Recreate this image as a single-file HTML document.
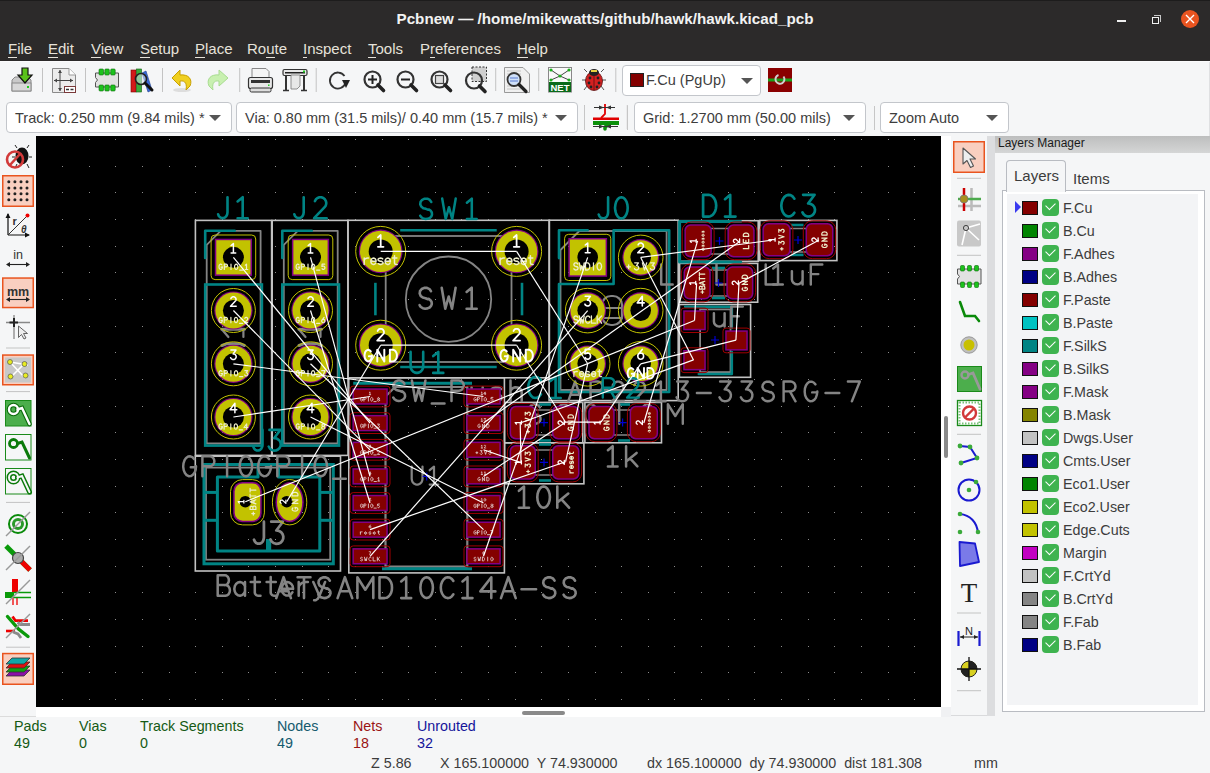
<!DOCTYPE html>
<html><head><meta charset="utf-8">
<style>
*{box-sizing:border-box}
html,body{margin:0;padding:0}
body{width:1210px;height:773px;overflow:hidden;position:relative;background:#f5f6f7;font-family:"Liberation Sans",sans-serif;color:#3c3c3c}
.a{position:absolute}
#title{left:0;top:0;width:1210px;height:61px;background:#2c2a2a;border-top:1px solid #1d1c1c}
#ttl{left:0;top:10px;width:1210px;text-align:center;color:#f2f2f2;font-weight:bold;font-size:15.2px;white-space:nowrap}
.menu{top:40px;color:#e6e2da;font-size:15px;white-space:nowrap}
.menu u{text-decoration:none;border-bottom:1.5px solid #e6e2da}
.combo{background:#fff;border:1px solid #c3c6cb;border-radius:4px;height:31px;top:102px}
.combo span{position:absolute;left:8px;top:7px;font-size:14.5px;color:#3d3d3d;white-space:nowrap}
.caret{position:absolute;width:0;height:0;border-left:6px solid transparent;border-right:6px solid transparent;border-top:6px solid #555}
.sep{background:#c6c6c6;width:1px}
.hsep{background:#c6c6c6;height:1px}
.btn{background:#f9cdbd;border:1.5px solid #e9541f}
.st{font-size:14.3px;white-space:nowrap;line-height:17px}
.lrow{left:1014px;height:23px;width:180px}
.sw{position:absolute;left:8px;top:1px;width:16px;height:14px;border:1px solid #111}
.cb{position:absolute;left:28px;top:-1px;width:17px;height:17px;background:#3eb34f;border-radius:4px}
.cb:after{content:"";position:absolute;left:4px;top:3px;width:8px;height:5px;border-left:1.6px solid #fff;border-bottom:1.6px solid #fff;transform:rotate(-45deg)}
.ln{position:absolute;left:49px;top:-0.5px;font-size:14.3px;color:#3c3c3c;white-space:nowrap}
</style></head><body>
<!-- title bar + menu -->
<div id="title" class="a"></div>
<div id="ttl" class="a">Pcbnew — /home/mikewatts/github/hawk/hawk.kicad_pcb</div>
<div class="a" style="left:1117px;top:20px;width:9px;height:2px;background:#f0f0f0"></div>
<div class="a" style="left:1152px;top:17px;width:7px;height:7px;border:1.5px solid #f0f0f0"></div>
<div class="a" style="left:1154px;top:15px;width:7px;height:7px;border-top:1px solid #c8c8c8;border-right:1px solid #c8c8c8"></div>
<div class="a" style="left:1181px;top:10px;width:18px;height:18px;border-radius:50%;background:#e95420"></div>
<svg class="a" style="left:1181px;top:10px" width="18" height="18"><path d="M5 5L13 13M13 5L5 13" stroke="#fff" stroke-width="1.4"/></svg>

<div class="a menu" style="left:8px"><u>F</u>ile</div>
<div class="a menu" style="left:48px"><u>E</u>dit</div>
<div class="a menu" style="left:91px"><u>V</u>iew</div>
<div class="a menu" style="left:140px"><u>S</u>etup</div>
<div class="a menu" style="left:195px"><u>P</u>lace</div>
<div class="a menu" style="left:247px">Ro<u>u</u>te</div>
<div class="a menu" style="left:303px"><u>I</u>nspect</div>
<div class="a menu" style="left:368px"><u>T</u>ools</div>
<div class="a menu" style="left:420px">P<u>r</u>eferences</div>
<div class="a menu" style="left:517px"><u>H</u>elp</div>

<!-- toolbar 1 -->
<div class="a" style="left:0;top:61px;width:1210px;height:1px;background:#fbfbfc"></div>
<div class="a" style="left:1209px;top:62px;width:1px;height:74px;background:#dfe0e2"></div>
<svg class="a" style="left:0;top:60px" width="800" height="76" viewBox="0 60 800 76"><path d="M12 80L15 77H28L31 80V91H12Z" fill="#c9c9c9" stroke="#8a8a8a" stroke-width="1"/><rect x="12" y="83" width="19" height="8" fill="#d8d8d8" stroke="#8a8a8a"/><rect x="27" y="86" width="2" height="2" fill="#2c2"/><path d="M22 68H28V75H32L25 83L18 75H22Z" fill="#5ac21a" stroke="#111" stroke-width="1.2"/><rect x="42.0" y="68" width="1" height="24" fill="#c3c3c3"/><path d="M52.5 68.5H69L75.5 75V92.5H52.5Z" fill="#ececec" stroke="#8a8a8a"/><path d="M69 68.5V75H75.5" fill="#fff" stroke="#9a9a9a"/><path d="M60 70V91M54 80.5H73" stroke="#444" stroke-width="1"/><path d="M60 70L58 73H62ZM60 91L58 88H62ZM54 80.5L57 78.5V82.5ZM73 80.5L70 78.5V82.5Z" fill="#444"/><rect x="64.5" y="86.5" width="11" height="6" fill="#fff" stroke="#7a3a3a"/><path d="M66 89.5h3M70.5 89.5h3" stroke="#333" stroke-width="1.5"/><rect x="85.0" y="68" width="1" height="24" fill="#c3c3c3"/><path d="M95.5 73H118.5V87H95.5V82.5L97.5 80L95.5 77.5Z" fill="#e2e2e2" stroke="#555"/><rect x="99" y="69" width="4.5" height="6" rx="1" fill="#1cc21c" stroke="#0a6a0a" stroke-width=".6"/><rect x="99" y="85" width="4.5" height="6" rx="1" fill="#1cc21c" stroke="#0a6a0a" stroke-width=".6"/><rect x="104.8" y="69" width="4.5" height="6" rx="1" fill="#1cc21c" stroke="#0a6a0a" stroke-width=".6"/><rect x="104.8" y="85" width="4.5" height="6" rx="1" fill="#1cc21c" stroke="#0a6a0a" stroke-width=".6"/><rect x="110.7" y="69" width="4.5" height="6" rx="1" fill="#1cc21c" stroke="#0a6a0a" stroke-width=".6"/><rect x="110.7" y="85" width="4.5" height="6" rx="1" fill="#1cc21c" stroke="#0a6a0a" stroke-width=".6"/><rect x="131" y="70" width="5" height="22" fill="#d21a1a" stroke="#7a0000" stroke-width=".6"/><rect x="136.5" y="69" width="5" height="23" fill="#3aaa3a" stroke="#0a5a0a" stroke-width=".6"/><path d="M142 73L146 71L152 90L148 92Z" fill="#3a6ad8" stroke="#1a3a8a" stroke-width=".6"/><circle cx="141" cy="79" r="5.5" fill="rgba(220,230,240,.55)" stroke="#222" stroke-width="1.6"/><path d="M145 83L152 90" stroke="#111" stroke-width="3" stroke-linecap="round"/><rect x="162.0" y="68" width="1" height="24" fill="#c3c3c3"/><ellipse cx="182" cy="90" rx="9" ry="2" fill="#ddd"/><path d="M180 75C188 74 193 79 190 86L186 90C187 85 186 80 180 81V86L172 78L180 70Z" fill="#f0d020" stroke="#c8a000" stroke-width="1"/><path d="M219 75C211 74 206 79 209 86L213 90C212 85 213 80 219 81V86L228 78L219 70Z" fill="#c8f0b0" stroke="#a8dc90" stroke-width="1"/><rect x="239.2" y="68" width="1" height="24" fill="#c3c3c3"/><path d="M252 68.5H266L269 71.5V78H252Z" fill="#f4f4f4" stroke="#888"/><rect x="248.5" y="77.5" width="24" height="11" rx="2" fill="#e8e8e8" stroke="#333" stroke-width="1.2"/><rect x="251" y="80" width="19" height="3" fill="#333"/><rect x="250" y="88" width="21" height="4" rx="1.5" fill="#ddd" stroke="#333"/><rect x="268" y="84.5" width="1.5" height="1.5" fill="#2c2"/><rect x="283" y="69.5" width="24" height="6" rx="1.5" fill="#e8e8e8" stroke="#333" stroke-width="1.2"/><rect x="285" y="72" width="20" height="1.5" fill="#222"/><rect x="303" y="70.5" width="2" height="2" fill="#2c2"/><path d="M286 75V90M304 75V90" stroke="#333" stroke-width="2"/><path d="M283 90.5H289M301 90.5H307" stroke="#333" stroke-width="1.6"/><path d="M291 75H300V86L297 89H291Z" fill="#e8e8e8" stroke="#777" stroke-width=".8"/><rect x="315.7" y="68" width="1" height="24" fill="#c3c3c3"/><path d="M344.5 76A8 8 0 1 0 345.5 83" fill="none" stroke="#333" stroke-width="1.8"/><path d="M342 80L346 88L350 80Z" fill="#222"/><circle cx="372.5" cy="79.5" r="8" fill="none" stroke="#333" stroke-width="2.2"/><path d="M378.0 85.0L383.5 90.5" stroke="#222" stroke-width="3.6" stroke-linecap="round"/><path d="M368 79.5H377M372.5 75V84" stroke="#222" stroke-width="2"/><circle cx="405.5" cy="79.5" r="8" fill="none" stroke="#333" stroke-width="2.2"/><path d="M411.0 85.0L416.5 90.5" stroke="#222" stroke-width="3.6" stroke-linecap="round"/><path d="M401 79.5H410" stroke="#222" stroke-width="2"/><circle cx="439.5" cy="79.5" r="8" fill="none" stroke="#333" stroke-width="2.2"/><path d="M445.0 85.0L450.5 90.5" stroke="#222" stroke-width="3.6" stroke-linecap="round"/><rect x="435.5" y="75.5" width="8" height="8" fill="#ddd" stroke="#444" stroke-width="1.2"/><rect x="472" y="67" width="14.5" height="14.5" fill="#cfcfcf" stroke="#333" stroke-width="1" stroke-dasharray="2 1.5"/><circle cx="474" cy="80.5" r="8" fill="none" stroke="#333" stroke-width="2.2"/><path d="M479.5 86.0L485 91.5" stroke="#222" stroke-width="3.6" stroke-linecap="round"/><rect x="495.2" y="68" width="1" height="23" fill="#c3c3c3"/><path d="M504.5 67.5H523L529.5 74V92.5H504.5Z" fill="#f0f0f0" stroke="#999"/><path d="M507 71h14" stroke="#bbb" stroke-width=".8"/><path d="M507 74h14" stroke="#bbb" stroke-width=".8"/><path d="M507 77h14" stroke="#bbb" stroke-width=".8"/><path d="M507 80h14" stroke="#bbb" stroke-width=".8"/><path d="M507 83h14" stroke="#bbb" stroke-width=".8"/><path d="M507 86h14" stroke="#bbb" stroke-width=".8"/><path d="M507 89h14" stroke="#bbb" stroke-width=".8"/><circle cx="514" cy="79.5" r="6.5" fill="#cfe0f8" stroke="#333" stroke-width="1.8"/><path d="M510 78h8M510 81h8" stroke="#5a7ad0" stroke-width="1.2"/><path d="M519 84.5L526 91.5" stroke="#222" stroke-width="3.2" stroke-linecap="round"/><rect x="538.2" y="68" width="1" height="23" fill="#c3c3c3"/><rect x="548.5" y="67.5" width="23" height="24.5" fill="#fafafa" stroke="#888"/><path d="M551 70L560 76L569 70M551 80L560 76L569 80" stroke="#333" stroke-width=".9" fill="none"/><circle cx="551" cy="70" r="1.6" fill="#1cb01c"/><circle cx="569" cy="70" r="1.6" fill="#1cb01c"/><circle cx="560" cy="76" r="1.6" fill="#1cb01c"/><circle cx="551" cy="80" r="1.6" fill="#1cb01c"/><circle cx="569" cy="80" r="1.6" fill="#1cb01c"/><rect x="549" y="82" width="22" height="10" fill="#0a6a1a"/><text x="560" y="90.8" font-size="9.5" font-weight="bold" fill="#fff" text-anchor="middle" font-family="Liberation Sans">NET</text><path d="M587 72L584 69M601 72L604 69M586 80H582M602 80H606M587 86L584 90M601 86L604 90" stroke="#555" stroke-width="1"/><ellipse cx="594" cy="81" rx="8.5" ry="9.5" fill="#d42020" stroke="#551010" stroke-width=".8"/><ellipse cx="594" cy="72.5" rx="5" ry="3.5" fill="#222"/><rect x="591" y="70" width="6" height="2" fill="#e8d040"/><path d="M594 75V90" stroke="#551010" stroke-width=".8"/><circle cx="590" cy="78" r="1.4" fill="#222"/><circle cx="598" cy="78" r="1.4" fill="#222"/><circle cx="589" cy="83" r="1.4" fill="#222"/><circle cx="599" cy="83" r="1.4" fill="#222"/><circle cx="591" cy="87" r="1.4" fill="#222"/><circle cx="597" cy="87" r="1.4" fill="#222"/><rect x="615.3" y="68" width="1" height="24" fill="#c3c3c3"/><rect x="768" y="68" width="24" height="24" fill="#8a0000"/><rect x="768" y="78.5" width="24" height="3" fill="#1aa01a"/><path d="M783.5 76.5A4.5 4.5 0 1 1 778.5 75" fill="none" stroke="#d0d0d0" stroke-width="2"/><rect x="584.0" y="105" width="1" height="24" fill="#c3c3c3"/><rect x="626.8" y="105" width="1" height="24" fill="#c3c3c3"/><rect x="873.5" y="105" width="1" height="24" fill="#c3c3c3"/><path d="M605 104V114L601 118" stroke="#e00000" stroke-width="1.8" fill="none"/><rect x="593" y="117.5" width="26" height="2.5" fill="#e00000"/><rect x="593" y="121" width="26" height="4" fill="#0a900a"/><path d="M609 124L605 127V129" stroke="#0a900a" stroke-width="3.5" stroke-linecap="round" fill="none"/><path d="M594 107.5H615M593 126.5H618" stroke="#333" stroke-width="1"/><path d="M604 107.5L599 105.5V109.5ZM606 107.5L611 105.5V109.5ZM604 126.5L599 124.5V128.5ZM606 126.5L611 124.5V128.5Z" fill="#333"/></svg><svg class="a" style="left:0;top:136px" width="36" height="580" viewBox="0 136 36 580"><ellipse cx="22" cy="156" rx="6.5" ry="8.5" fill="#111"/><path d="M17 148L15 145M27 148L29 145M15 157H12M29 157H32M17 164L15 168M27 164L29 168" stroke="#222" stroke-width="1"/><circle cx="15" cy="159.5" r="8" fill="none" stroke="#d23a3a" stroke-width="2.6"/><path d="M10 165L20 154" stroke="#d23a3a" stroke-width="2.6"/><rect x="2.75" y="175.75" width="30.5" height="30.5" fill="#f9cfc0" stroke="#e9541f" stroke-width="1.5"/><circle cx="8.8" cy="181.7" r="1.5" fill="#222"/><circle cx="8.8" cy="187.9" r="1.5" fill="#222"/><circle cx="8.8" cy="193.7" r="1.5" fill="#222"/><circle cx="8.8" cy="199.8" r="1.5" fill="#222"/><circle cx="14.9" cy="181.7" r="1.5" fill="#222"/><circle cx="14.9" cy="187.9" r="1.5" fill="#222"/><circle cx="14.9" cy="193.7" r="1.5" fill="#222"/><circle cx="14.9" cy="199.8" r="1.5" fill="#222"/><circle cx="21" cy="181.7" r="1.5" fill="#222"/><circle cx="21" cy="187.9" r="1.5" fill="#222"/><circle cx="21" cy="193.7" r="1.5" fill="#222"/><circle cx="21" cy="199.8" r="1.5" fill="#222"/><circle cx="27" cy="181.7" r="1.5" fill="#222"/><circle cx="27" cy="187.9" r="1.5" fill="#222"/><circle cx="27" cy="193.7" r="1.5" fill="#222"/><circle cx="27" cy="199.8" r="1.5" fill="#222"/><path d="M8 235V214M8 235H29" stroke="#111" stroke-width="1.2"/><path d="M8 213L5.5 218H10.5ZM30 235L25 232.5V237.5Z" fill="#111"/><path d="M8 235L27 216" stroke="#333" stroke-width="1"/><circle cx="27.5" cy="215.5" r="2" fill="#e00"/><text x="12.5" y="225" font-size="11" font-weight="bold" fill="#333" font-family="Liberation Sans">r</text><text x="21" y="233" font-size="10" font-weight="bold" font-style="italic" fill="#333" font-family="Liberation Sans">θ</text><text x="18" y="259" font-size="12.5" fill="#333" text-anchor="middle" font-family="Liberation Sans">in</text><path d="M7 264.5H29" stroke="#222" stroke-width="1.1"/><path d="M6 264.5L10 262V267ZM30 264.5L26 262V267Z" fill="#222"/><rect x="2.75" y="278.05" width="30.5" height="29.5" fill="#f9cfc0" stroke="#e9541f" stroke-width="1.5"/><text x="18" y="296" font-size="12.5" font-weight="bold" fill="#333" text-anchor="middle" font-family="Liberation Sans">mm</text><path d="M7 299.5H29" stroke="#222" stroke-width="1.1"/><path d="M6 299.5L10 297V302ZM30 299.5L26 297V302Z" fill="#222"/><path d="M14 315V339M6 322.5H30" stroke="#888" stroke-width="1.3"/><path d="M9.5 322.5H18M14 318V327" stroke="#222" stroke-width="2"/><path d="M18.5 326V337.5L21.5 334.5L24 339L26 338L23.5 333.5H27.5Z" fill="#eee" stroke="#555" stroke-width=".9"/><rect x="6" y="347.5" width="24" height="1" fill="#c3c3c3"/><rect x="2.75" y="355.05" width="30.5" height="29.69999999999999" fill="#f9cfc0" stroke="#e9541f" stroke-width="1.5"/><rect x="5" y="357.5" width="26" height="25" fill="#c8c8c8"/><path d="M10 362L25 378M25 363L10 378M10 362L28 365" stroke="#fff" stroke-width="1.6"/><circle cx="10" cy="362" r="2.5" fill="#e8ec20" stroke="#555" stroke-width=".7"/><circle cx="24.5" cy="364" r="2.5" fill="#e8ec20" stroke="#555" stroke-width=".7"/><circle cx="10.5" cy="376.5" r="2.5" fill="#e8ec20" stroke="#555" stroke-width=".7"/><circle cx="25.5" cy="375.5" r="2.5" fill="#e8ec20" stroke="#555" stroke-width=".7"/><rect x="6" y="391.1" width="24" height="1" fill="#c3c3c3"/><rect x="5.5" y="400.5" width="25.5" height="25.5" fill="#4cae4c" stroke="#1a8a1a" stroke-width="1"/><circle cx="13.5" cy="409.5" r="4.5" fill="none" stroke="#0a6a0a" stroke-width="4.6"/><path d="M17.5 409.5L22 408L29.5 424" fill="none" stroke="#0a6a0a" stroke-width="4.6" stroke-linecap="round"/><circle cx="13.5" cy="409.5" r="4.5" fill="none" stroke="#fff" stroke-width="2.4"/><path d="M17.5 409.5L22 408L29.5 424" fill="none" stroke="#fff" stroke-width="2.4" stroke-linecap="round"/><rect x="5.5" y="434.5" width="25.5" height="25.5" fill="#f5f6f7" stroke="#1a8a1a" stroke-width="1"/><circle cx="13.5" cy="443.5" r="4" fill="none" stroke="#0a7a0a" stroke-width="2.8"/><path d="M17.5 443.5L22 442L29.5 458" fill="none" stroke="#0a7a0a" stroke-width="3" stroke-linecap="round"/><rect x="5.5" y="468.5" width="25.5" height="25.5" fill="#f5f6f7" stroke="#1a8a1a" stroke-width="1"/><circle cx="13.5" cy="477.5" r="4.5" fill="none" stroke="#0a7a0a" stroke-width="5"/><path d="M17.5 477.5L22 476L29.5 492" fill="none" stroke="#0a7a0a" stroke-width="5" stroke-linecap="round"/><circle cx="13.5" cy="477.5" r="4.5" fill="none" stroke="#f5f6f7" stroke-width="2"/><path d="M17.5 477.5L22 476L29.5 492" fill="none" stroke="#f5f6f7" stroke-width="2" stroke-linecap="round"/><rect x="6" y="501.9" width="24" height="1" fill="#c3c3c3"/><circle cx="18" cy="524" r="9" fill="none" stroke="#0a8a0a" stroke-width="2"/><circle cx="18" cy="524" r="6" fill="#2a9a2a"/><circle cx="18" cy="524" r="3" fill="#f5f6f7"/><path d="M6 536L30 512" stroke="#999" stroke-width="1.5"/><path d="M6 546L30 570" stroke="#0a9a0a" stroke-width="5"/><path d="M18 558L30 570" stroke="#e00" stroke-width="5"/><circle cx="18" cy="558" r="5.5" fill="#aaa" stroke="#444" stroke-width="1.2"/><path d="M6 570L30 546" stroke="#999" stroke-width="1.4"/><rect x="12" y="579" width="6" height="13" fill="#e00"/><rect x="5" y="592" width="9" height="6" fill="#0a9a0a"/><path d="M13 598V605M17 598V605" stroke="#e00" stroke-width="1.3"/><path d="M14 592.5H31M14 597.5H31" stroke="#0a9a0a" stroke-width="1.3"/><path d="M6 604L30 580" stroke="#999" stroke-width="1.4"/><path d="M7.5 616.5L18.5 629L28 636.5" fill="none" stroke="#0a9a0a" stroke-width="3.4" stroke-linecap="round"/><path d="M12.5 616.5L15.5 620.7H28" fill="none" stroke="#e00" stroke-width="2.8"/><path d="M17.5 622.5L20.5 624.5H30" fill="none" stroke="#8a8a8a" stroke-width="2.8"/><path d="M6 631H15" fill="none" stroke="#e00" stroke-width="2.6"/><path d="M13 632L18 634L21 638" fill="none" stroke="#8a8a8a" stroke-width="2.8"/><path d="M6 638L30 614" stroke="#999" stroke-width="1.4"/><rect x="6" y="646.7" width="24" height="1" fill="#c3c3c3"/><rect x="2.75" y="653.55" width="30.5" height="30.700000000000045" fill="#f9cfc0" stroke="#e9541f" stroke-width="1.5"/><path d="M6 676L12 670H30L24 676Z" fill="#8a10a8" stroke="#333" stroke-width=".8"/><path d="M6 672L12 666H30L24 672Z" fill="#10a010" stroke="#333" stroke-width=".8"/><path d="M6 668L12 662H30L24 668Z" fill="#e01010" stroke="#333" stroke-width=".8"/><path d="M6 664L12 658H30L24 664Z" fill="#10a8a8" stroke="#333" stroke-width=".8"/></svg><svg class="a" style="left:951px;top:136px" width="36" height="580" viewBox="951 136 36 580"><rect x="953.75" y="141.75" width="30.5" height="30.5" fill="#f9cfc0" stroke="#e9541f" stroke-width="1.5"/><path d="M963 148V164L967 160.5L970.5 167.5L973.5 166L970 159H975.5Z" fill="#eee" stroke="#555" stroke-width="1.1" stroke-linejoin="round"/><rect x="957" y="177.8" width="24" height="1" fill="#c3c3c3"/><path d="M971.5 188V211M958 206H981" stroke="#bbb" stroke-width="2.5"/><path d="M958 199H981" stroke="#4caa4c" stroke-width="2.5"/><path d="M964 188V211" stroke="#c00" stroke-width="2.5"/><circle cx="964" cy="199" r="4" fill="#a89020" stroke="#777" stroke-width=".8"/><rect x="957" y="220.5" width="24" height="26" rx="2" fill="#c8c8c8"/><path d="M966 228L962 245M966 228L980 224M966 228L979 240" stroke="#fff" stroke-width="1.6"/><circle cx="966" cy="228" r="2.6" fill="#c8c8c8" stroke="#333" stroke-width=".9"/><rect x="957" y="254.8" width="24" height="1" fill="#c3c3c3"/><path d="M957.5 269H981V284H957.5V279L959.5 276.5L957.5 274Z" fill="#e2e2e2" stroke="#555"/><rect x="960.5" y="265.5" width="4" height="5.5" rx="1" fill="#1cc21c" stroke="#0a6a0a" stroke-width=".6"/><rect x="960.5" y="282" width="4" height="5.5" rx="1" fill="#1cc21c" stroke="#0a6a0a" stroke-width=".6"/><rect x="967.5" y="265.5" width="4" height="5.5" rx="1" fill="#1cc21c" stroke="#0a6a0a" stroke-width=".6"/><rect x="967.5" y="282" width="4" height="5.5" rx="1" fill="#1cc21c" stroke="#0a6a0a" stroke-width=".6"/><rect x="974.5" y="265.5" width="4" height="5.5" rx="1" fill="#1cc21c" stroke="#0a6a0a" stroke-width=".6"/><rect x="974.5" y="282" width="4" height="5.5" rx="1" fill="#1cc21c" stroke="#0a6a0a" stroke-width=".6"/><path d="M960 302L965 316H975L979 321" fill="none" stroke="#0a8a0a" stroke-width="2.6" stroke-linecap="round"/><circle cx="969" cy="345" r="8.2" fill="#bfbfbf" stroke="#999" stroke-width="1"/><circle cx="969" cy="345" r="5.5" fill="#c8c000"/><rect x="957.5" y="366.5" width="24" height="25" fill="#4cae4c" stroke="#1a8a1a"/><circle cx="965" cy="375" r="3.5" fill="none" stroke="#999" stroke-width="2.4"/><path d="M968.5 374.5L973 373L980 389" fill="none" stroke="#999" stroke-width="2.8" stroke-linecap="round"/><rect x="957.5" y="400.5" width="24" height="25" fill="#fff" stroke="#1a8a1a" stroke-width="1.3"/><rect x="959.5" y="402.5" width="20" height="21" fill="none" stroke="#7ac07a" stroke-width="2" stroke-dasharray="1.5 1.5"/><circle cx="969.5" cy="413" r="6.5" fill="none" stroke="#d23a3a" stroke-width="2.4"/><path d="M965 417.5L974 408.5" stroke="#d23a3a" stroke-width="2.4"/><rect x="957" y="433.8" width="24" height="1" fill="#c3c3c3"/><path d="M960 446L970 447L977 458L961 463" fill="none" stroke="#1a1ad0" stroke-width="2"/><circle cx="960" cy="446" r="2.4" fill="#3aaa3a"/><circle cx="970" cy="447" r="2.4" fill="#3aaa3a"/><circle cx="977" cy="458" r="2.4" fill="#3aaa3a"/><circle cx="961" cy="463" r="2.4" fill="#3aaa3a"/><circle cx="969" cy="490" r="10.5" fill="none" stroke="#1a1ad0" stroke-width="2"/><circle cx="969" cy="490" r="2.3" fill="#3aaa3a"/><circle cx="976" cy="482" r="2.3" fill="#3aaa3a"/><path d="M960 514C970 515 977 522 978 533" fill="none" stroke="#1a1ad0" stroke-width="2"/><circle cx="960" cy="514" r="2.3" fill="#3aaa3a"/><circle cx="978" cy="532" r="2.3" fill="#3aaa3a"/><circle cx="960" cy="532" r="2.3" fill="#3aaa3a"/><path d="M959.5 542L975 543.5L979 562L960 566Z" fill="#7a7ae8" stroke="#1a1ad0" stroke-width="1.8" stroke-linejoin="round"/><text x="969" y="602" font-size="27" fill="#222" text-anchor="middle" font-family="Liberation Serif">T</text><rect x="957" y="612.5" width="24" height="1" fill="#c3c3c3"/><text x="969" y="635" font-size="11" fill="#222" text-anchor="middle" font-family="Liberation Sans">N</text><path d="M958.5 631V646M979.5 631V646" stroke="#1a1ad0" stroke-width="2.2"/><path d="M960 637H978" stroke="#222" stroke-width="1"/><path d="M960 637L964 635V639ZM978 637L974 635V639Z" fill="#222"/><circle cx="969" cy="669" r="8" fill="#d8d020" stroke="#222" stroke-width="1"/><path d="M969 661A8 8 0 0 1 977 669H969ZM969 677A8 8 0 0 1 961 669H969Z" fill="#222"/><path d="M969 657V681M957 669H981" stroke="#111" stroke-width="1.3"/><rect x="957" y="690.2" width="24" height="1" fill="#c3c3c3"/></svg>

<div class="a combo" style="left:622px;top:65px;width:139px;height:31px"><i style="position:absolute;left:7px;top:7px;width:14px;height:14px;background:#840000;border:1px solid #222"></i><span style="left:23px;top:6px;font-size:14.5px">F.Cu (PgUp)</span><i class="caret" style="left:118px;top:12px"></i></div>
<!-- toolbar 2 combos -->
<div class="a combo" style="left:6px;width:226px"><span>Track: 0.250 mm (9.84 mils) *</span><i class="caret" style="left:202px;top:12px"></i></div>
<div class="a combo" style="left:236px;width:342px"><span>Via: 0.80 mm (31.5 mils)/ 0.40 mm (15.7 mils) *</span><i class="caret" style="left:318px;top:12px"></i></div>
<div class="a sep" style="left:584px;top:106px;height:24px"></div>
<div class="a sep" style="left:627px;top:106px;height:24px"></div>
<div class="a combo" style="left:634px;width:232px"><span>Grid: 1.2700 mm (50.00 mils)</span><i class="caret" style="left:208px;top:12px"></i></div>
<div class="a sep" style="left:874px;top:106px;height:24px"></div>
<div class="a combo" style="left:880px;width:129px"><span>Zoom Auto</span><i class="caret" style="left:105px;top:12px"></i></div>

<!-- canvas -->
<div class="a" style="left:36px;top:136px;width:905px;height:571px;background:#000"></div>
<div class="a" style="left:941px;top:136px;width:10px;height:571px;background:#fff"></div><div class="a" style="left:941px;top:707px;width:10px;height:10px;background:#f0f1f3"></div>
<div class="a" style="left:36px;top:707px;width:905px;height:10px;background:#fff"></div>
<div class="a" style="left:944px;top:416px;width:4px;height:42px;background:#8a8a8a;border-radius:2px"></div>
<div class="a" style="left:522px;top:711px;width:43px;height:4px;background:#8a8a8a;border-radius:2px"></div>
<svg class="a" style="left:36px;top:136px" width="905" height="571" viewBox="36 136 905 571" font-family="Liberation Sans"><path d="M62 139h1v1h-1zM62 166h1v1h-1zM62 192h1v1h-1zM62 219h1v1h-1zM62 246h1v1h-1zM62 272h1v1h-1zM62 299h1v1h-1zM62 326h1v1h-1zM62 352h1v1h-1zM62 379h1v1h-1zM62 406h1v1h-1zM62 432h1v1h-1zM62 459h1v1h-1zM62 486h1v1h-1zM62 512h1v1h-1zM62 539h1v1h-1zM62 566h1v1h-1zM62 592h1v1h-1zM62 619h1v1h-1zM62 646h1v1h-1zM62 672h1v1h-1zM62 699h1v1h-1zM89 139h1v1h-1zM89 166h1v1h-1zM89 192h1v1h-1zM89 219h1v1h-1zM89 246h1v1h-1zM89 272h1v1h-1zM89 299h1v1h-1zM89 326h1v1h-1zM89 352h1v1h-1zM89 379h1v1h-1zM89 406h1v1h-1zM89 432h1v1h-1zM89 459h1v1h-1zM89 486h1v1h-1zM89 512h1v1h-1zM89 539h1v1h-1zM89 566h1v1h-1zM89 592h1v1h-1zM89 619h1v1h-1zM89 646h1v1h-1zM89 672h1v1h-1zM89 699h1v1h-1zM115 139h1v1h-1zM115 166h1v1h-1zM115 192h1v1h-1zM115 219h1v1h-1zM115 246h1v1h-1zM115 272h1v1h-1zM115 299h1v1h-1zM115 326h1v1h-1zM115 352h1v1h-1zM115 379h1v1h-1zM115 406h1v1h-1zM115 432h1v1h-1zM115 459h1v1h-1zM115 486h1v1h-1zM115 512h1v1h-1zM115 539h1v1h-1zM115 566h1v1h-1zM115 592h1v1h-1zM115 619h1v1h-1zM115 646h1v1h-1zM115 672h1v1h-1zM115 699h1v1h-1zM142 139h1v1h-1zM142 166h1v1h-1zM142 192h1v1h-1zM142 219h1v1h-1zM142 246h1v1h-1zM142 272h1v1h-1zM142 299h1v1h-1zM142 326h1v1h-1zM142 352h1v1h-1zM142 379h1v1h-1zM142 406h1v1h-1zM142 432h1v1h-1zM142 459h1v1h-1zM142 486h1v1h-1zM142 512h1v1h-1zM142 539h1v1h-1zM142 566h1v1h-1zM142 592h1v1h-1zM142 619h1v1h-1zM142 646h1v1h-1zM142 672h1v1h-1zM142 699h1v1h-1zM169 139h1v1h-1zM169 166h1v1h-1zM169 192h1v1h-1zM169 219h1v1h-1zM169 246h1v1h-1zM169 272h1v1h-1zM169 299h1v1h-1zM169 326h1v1h-1zM169 352h1v1h-1zM169 379h1v1h-1zM169 406h1v1h-1zM169 432h1v1h-1zM169 459h1v1h-1zM169 486h1v1h-1zM169 512h1v1h-1zM169 539h1v1h-1zM169 566h1v1h-1zM169 592h1v1h-1zM169 619h1v1h-1zM169 646h1v1h-1zM169 672h1v1h-1zM169 699h1v1h-1zM195 139h1v1h-1zM195 166h1v1h-1zM195 192h1v1h-1zM195 219h1v1h-1zM195 246h1v1h-1zM195 272h1v1h-1zM195 299h1v1h-1zM195 326h1v1h-1zM195 352h1v1h-1zM195 379h1v1h-1zM195 406h1v1h-1zM195 432h1v1h-1zM195 459h1v1h-1zM195 486h1v1h-1zM195 512h1v1h-1zM195 539h1v1h-1zM195 566h1v1h-1zM195 592h1v1h-1zM195 619h1v1h-1zM195 646h1v1h-1zM195 672h1v1h-1zM195 699h1v1h-1zM222 139h1v1h-1zM222 166h1v1h-1zM222 192h1v1h-1zM222 219h1v1h-1zM222 246h1v1h-1zM222 272h1v1h-1zM222 299h1v1h-1zM222 326h1v1h-1zM222 352h1v1h-1zM222 379h1v1h-1zM222 406h1v1h-1zM222 432h1v1h-1zM222 459h1v1h-1zM222 486h1v1h-1zM222 512h1v1h-1zM222 539h1v1h-1zM222 566h1v1h-1zM222 592h1v1h-1zM222 619h1v1h-1zM222 646h1v1h-1zM222 672h1v1h-1zM222 699h1v1h-1zM248 139h1v1h-1zM248 166h1v1h-1zM248 192h1v1h-1zM248 219h1v1h-1zM248 246h1v1h-1zM248 272h1v1h-1zM248 299h1v1h-1zM248 326h1v1h-1zM248 352h1v1h-1zM248 379h1v1h-1zM248 406h1v1h-1zM248 432h1v1h-1zM248 459h1v1h-1zM248 486h1v1h-1zM248 512h1v1h-1zM248 539h1v1h-1zM248 566h1v1h-1zM248 592h1v1h-1zM248 619h1v1h-1zM248 646h1v1h-1zM248 672h1v1h-1zM248 699h1v1h-1zM275 139h1v1h-1zM275 166h1v1h-1zM275 192h1v1h-1zM275 219h1v1h-1zM275 246h1v1h-1zM275 272h1v1h-1zM275 299h1v1h-1zM275 326h1v1h-1zM275 352h1v1h-1zM275 379h1v1h-1zM275 406h1v1h-1zM275 432h1v1h-1zM275 459h1v1h-1zM275 486h1v1h-1zM275 512h1v1h-1zM275 539h1v1h-1zM275 566h1v1h-1zM275 592h1v1h-1zM275 619h1v1h-1zM275 646h1v1h-1zM275 672h1v1h-1zM275 699h1v1h-1zM302 139h1v1h-1zM302 166h1v1h-1zM302 192h1v1h-1zM302 219h1v1h-1zM302 246h1v1h-1zM302 272h1v1h-1zM302 299h1v1h-1zM302 326h1v1h-1zM302 352h1v1h-1zM302 379h1v1h-1zM302 406h1v1h-1zM302 432h1v1h-1zM302 459h1v1h-1zM302 486h1v1h-1zM302 512h1v1h-1zM302 539h1v1h-1zM302 566h1v1h-1zM302 592h1v1h-1zM302 619h1v1h-1zM302 646h1v1h-1zM302 672h1v1h-1zM302 699h1v1h-1zM328 139h1v1h-1zM328 166h1v1h-1zM328 192h1v1h-1zM328 219h1v1h-1zM328 246h1v1h-1zM328 272h1v1h-1zM328 299h1v1h-1zM328 326h1v1h-1zM328 352h1v1h-1zM328 379h1v1h-1zM328 406h1v1h-1zM328 432h1v1h-1zM328 459h1v1h-1zM328 486h1v1h-1zM328 512h1v1h-1zM328 539h1v1h-1zM328 566h1v1h-1zM328 592h1v1h-1zM328 619h1v1h-1zM328 646h1v1h-1zM328 672h1v1h-1zM328 699h1v1h-1zM355 139h1v1h-1zM355 166h1v1h-1zM355 192h1v1h-1zM355 219h1v1h-1zM355 246h1v1h-1zM355 272h1v1h-1zM355 299h1v1h-1zM355 326h1v1h-1zM355 352h1v1h-1zM355 379h1v1h-1zM355 406h1v1h-1zM355 432h1v1h-1zM355 459h1v1h-1zM355 486h1v1h-1zM355 512h1v1h-1zM355 539h1v1h-1zM355 566h1v1h-1zM355 592h1v1h-1zM355 619h1v1h-1zM355 646h1v1h-1zM355 672h1v1h-1zM355 699h1v1h-1zM382 139h1v1h-1zM382 166h1v1h-1zM382 192h1v1h-1zM382 219h1v1h-1zM382 246h1v1h-1zM382 272h1v1h-1zM382 299h1v1h-1zM382 326h1v1h-1zM382 352h1v1h-1zM382 379h1v1h-1zM382 406h1v1h-1zM382 432h1v1h-1zM382 459h1v1h-1zM382 486h1v1h-1zM382 512h1v1h-1zM382 539h1v1h-1zM382 566h1v1h-1zM382 592h1v1h-1zM382 619h1v1h-1zM382 646h1v1h-1zM382 672h1v1h-1zM382 699h1v1h-1zM408 139h1v1h-1zM408 166h1v1h-1zM408 192h1v1h-1zM408 219h1v1h-1zM408 246h1v1h-1zM408 272h1v1h-1zM408 299h1v1h-1zM408 326h1v1h-1zM408 352h1v1h-1zM408 379h1v1h-1zM408 406h1v1h-1zM408 432h1v1h-1zM408 459h1v1h-1zM408 486h1v1h-1zM408 512h1v1h-1zM408 539h1v1h-1zM408 566h1v1h-1zM408 592h1v1h-1zM408 619h1v1h-1zM408 646h1v1h-1zM408 672h1v1h-1zM408 699h1v1h-1zM435 139h1v1h-1zM435 166h1v1h-1zM435 192h1v1h-1zM435 219h1v1h-1zM435 246h1v1h-1zM435 272h1v1h-1zM435 299h1v1h-1zM435 326h1v1h-1zM435 352h1v1h-1zM435 379h1v1h-1zM435 406h1v1h-1zM435 432h1v1h-1zM435 459h1v1h-1zM435 486h1v1h-1zM435 512h1v1h-1zM435 539h1v1h-1zM435 566h1v1h-1zM435 592h1v1h-1zM435 619h1v1h-1zM435 646h1v1h-1zM435 672h1v1h-1zM435 699h1v1h-1zM461 139h1v1h-1zM461 166h1v1h-1zM461 192h1v1h-1zM461 219h1v1h-1zM461 246h1v1h-1zM461 272h1v1h-1zM461 299h1v1h-1zM461 326h1v1h-1zM461 352h1v1h-1zM461 379h1v1h-1zM461 406h1v1h-1zM461 432h1v1h-1zM461 459h1v1h-1zM461 486h1v1h-1zM461 512h1v1h-1zM461 539h1v1h-1zM461 566h1v1h-1zM461 592h1v1h-1zM461 619h1v1h-1zM461 646h1v1h-1zM461 672h1v1h-1zM461 699h1v1h-1zM488 139h1v1h-1zM488 166h1v1h-1zM488 192h1v1h-1zM488 219h1v1h-1zM488 246h1v1h-1zM488 272h1v1h-1zM488 299h1v1h-1zM488 326h1v1h-1zM488 352h1v1h-1zM488 379h1v1h-1zM488 406h1v1h-1zM488 432h1v1h-1zM488 459h1v1h-1zM488 486h1v1h-1zM488 512h1v1h-1zM488 539h1v1h-1zM488 566h1v1h-1zM488 592h1v1h-1zM488 619h1v1h-1zM488 646h1v1h-1zM488 672h1v1h-1zM488 699h1v1h-1zM515 139h1v1h-1zM515 166h1v1h-1zM515 192h1v1h-1zM515 219h1v1h-1zM515 246h1v1h-1zM515 272h1v1h-1zM515 299h1v1h-1zM515 326h1v1h-1zM515 352h1v1h-1zM515 379h1v1h-1zM515 406h1v1h-1zM515 432h1v1h-1zM515 459h1v1h-1zM515 486h1v1h-1zM515 512h1v1h-1zM515 539h1v1h-1zM515 566h1v1h-1zM515 592h1v1h-1zM515 619h1v1h-1zM515 646h1v1h-1zM515 672h1v1h-1zM515 699h1v1h-1zM541 139h1v1h-1zM541 166h1v1h-1zM541 192h1v1h-1zM541 219h1v1h-1zM541 246h1v1h-1zM541 272h1v1h-1zM541 299h1v1h-1zM541 326h1v1h-1zM541 352h1v1h-1zM541 379h1v1h-1zM541 406h1v1h-1zM541 432h1v1h-1zM541 459h1v1h-1zM541 486h1v1h-1zM541 512h1v1h-1zM541 539h1v1h-1zM541 566h1v1h-1zM541 592h1v1h-1zM541 619h1v1h-1zM541 646h1v1h-1zM541 672h1v1h-1zM541 699h1v1h-1zM568 139h1v1h-1zM568 166h1v1h-1zM568 192h1v1h-1zM568 219h1v1h-1zM568 246h1v1h-1zM568 272h1v1h-1zM568 299h1v1h-1zM568 326h1v1h-1zM568 352h1v1h-1zM568 379h1v1h-1zM568 406h1v1h-1zM568 432h1v1h-1zM568 459h1v1h-1zM568 486h1v1h-1zM568 512h1v1h-1zM568 539h1v1h-1zM568 566h1v1h-1zM568 592h1v1h-1zM568 619h1v1h-1zM568 646h1v1h-1zM568 672h1v1h-1zM568 699h1v1h-1zM595 139h1v1h-1zM595 166h1v1h-1zM595 192h1v1h-1zM595 219h1v1h-1zM595 246h1v1h-1zM595 272h1v1h-1zM595 299h1v1h-1zM595 326h1v1h-1zM595 352h1v1h-1zM595 379h1v1h-1zM595 406h1v1h-1zM595 432h1v1h-1zM595 459h1v1h-1zM595 486h1v1h-1zM595 512h1v1h-1zM595 539h1v1h-1zM595 566h1v1h-1zM595 592h1v1h-1zM595 619h1v1h-1zM595 646h1v1h-1zM595 672h1v1h-1zM595 699h1v1h-1zM621 139h1v1h-1zM621 166h1v1h-1zM621 192h1v1h-1zM621 219h1v1h-1zM621 246h1v1h-1zM621 272h1v1h-1zM621 299h1v1h-1zM621 326h1v1h-1zM621 352h1v1h-1zM621 379h1v1h-1zM621 406h1v1h-1zM621 432h1v1h-1zM621 459h1v1h-1zM621 486h1v1h-1zM621 512h1v1h-1zM621 539h1v1h-1zM621 566h1v1h-1zM621 592h1v1h-1zM621 619h1v1h-1zM621 646h1v1h-1zM621 672h1v1h-1zM621 699h1v1h-1zM648 139h1v1h-1zM648 166h1v1h-1zM648 192h1v1h-1zM648 219h1v1h-1zM648 246h1v1h-1zM648 272h1v1h-1zM648 299h1v1h-1zM648 326h1v1h-1zM648 352h1v1h-1zM648 379h1v1h-1zM648 406h1v1h-1zM648 432h1v1h-1zM648 459h1v1h-1zM648 486h1v1h-1zM648 512h1v1h-1zM648 539h1v1h-1zM648 566h1v1h-1zM648 592h1v1h-1zM648 619h1v1h-1zM648 646h1v1h-1zM648 672h1v1h-1zM648 699h1v1h-1zM674 139h1v1h-1zM674 166h1v1h-1zM674 192h1v1h-1zM674 219h1v1h-1zM674 246h1v1h-1zM674 272h1v1h-1zM674 299h1v1h-1zM674 326h1v1h-1zM674 352h1v1h-1zM674 379h1v1h-1zM674 406h1v1h-1zM674 432h1v1h-1zM674 459h1v1h-1zM674 486h1v1h-1zM674 512h1v1h-1zM674 539h1v1h-1zM674 566h1v1h-1zM674 592h1v1h-1zM674 619h1v1h-1zM674 646h1v1h-1zM674 672h1v1h-1zM674 699h1v1h-1zM701 139h1v1h-1zM701 166h1v1h-1zM701 192h1v1h-1zM701 219h1v1h-1zM701 246h1v1h-1zM701 272h1v1h-1zM701 299h1v1h-1zM701 326h1v1h-1zM701 352h1v1h-1zM701 379h1v1h-1zM701 406h1v1h-1zM701 432h1v1h-1zM701 459h1v1h-1zM701 486h1v1h-1zM701 512h1v1h-1zM701 539h1v1h-1zM701 566h1v1h-1zM701 592h1v1h-1zM701 619h1v1h-1zM701 646h1v1h-1zM701 672h1v1h-1zM701 699h1v1h-1zM728 139h1v1h-1zM728 166h1v1h-1zM728 192h1v1h-1zM728 219h1v1h-1zM728 246h1v1h-1zM728 272h1v1h-1zM728 299h1v1h-1zM728 326h1v1h-1zM728 352h1v1h-1zM728 379h1v1h-1zM728 406h1v1h-1zM728 432h1v1h-1zM728 459h1v1h-1zM728 486h1v1h-1zM728 512h1v1h-1zM728 539h1v1h-1zM728 566h1v1h-1zM728 592h1v1h-1zM728 619h1v1h-1zM728 646h1v1h-1zM728 672h1v1h-1zM728 699h1v1h-1zM754 139h1v1h-1zM754 166h1v1h-1zM754 192h1v1h-1zM754 219h1v1h-1zM754 246h1v1h-1zM754 272h1v1h-1zM754 299h1v1h-1zM754 326h1v1h-1zM754 352h1v1h-1zM754 379h1v1h-1zM754 406h1v1h-1zM754 432h1v1h-1zM754 459h1v1h-1zM754 486h1v1h-1zM754 512h1v1h-1zM754 539h1v1h-1zM754 566h1v1h-1zM754 592h1v1h-1zM754 619h1v1h-1zM754 646h1v1h-1zM754 672h1v1h-1zM754 699h1v1h-1zM781 139h1v1h-1zM781 166h1v1h-1zM781 192h1v1h-1zM781 219h1v1h-1zM781 246h1v1h-1zM781 272h1v1h-1zM781 299h1v1h-1zM781 326h1v1h-1zM781 352h1v1h-1zM781 379h1v1h-1zM781 406h1v1h-1zM781 432h1v1h-1zM781 459h1v1h-1zM781 486h1v1h-1zM781 512h1v1h-1zM781 539h1v1h-1zM781 566h1v1h-1zM781 592h1v1h-1zM781 619h1v1h-1zM781 646h1v1h-1zM781 672h1v1h-1zM781 699h1v1h-1zM808 139h1v1h-1zM808 166h1v1h-1zM808 192h1v1h-1zM808 219h1v1h-1zM808 246h1v1h-1zM808 272h1v1h-1zM808 299h1v1h-1zM808 326h1v1h-1zM808 352h1v1h-1zM808 379h1v1h-1zM808 406h1v1h-1zM808 432h1v1h-1zM808 459h1v1h-1zM808 486h1v1h-1zM808 512h1v1h-1zM808 539h1v1h-1zM808 566h1v1h-1zM808 592h1v1h-1zM808 619h1v1h-1zM808 646h1v1h-1zM808 672h1v1h-1zM808 699h1v1h-1zM834 139h1v1h-1zM834 166h1v1h-1zM834 192h1v1h-1zM834 219h1v1h-1zM834 246h1v1h-1zM834 272h1v1h-1zM834 299h1v1h-1zM834 326h1v1h-1zM834 352h1v1h-1zM834 379h1v1h-1zM834 406h1v1h-1zM834 432h1v1h-1zM834 459h1v1h-1zM834 486h1v1h-1zM834 512h1v1h-1zM834 539h1v1h-1zM834 566h1v1h-1zM834 592h1v1h-1zM834 619h1v1h-1zM834 646h1v1h-1zM834 672h1v1h-1zM834 699h1v1h-1zM861 139h1v1h-1zM861 166h1v1h-1zM861 192h1v1h-1zM861 219h1v1h-1zM861 246h1v1h-1zM861 272h1v1h-1zM861 299h1v1h-1zM861 326h1v1h-1zM861 352h1v1h-1zM861 379h1v1h-1zM861 406h1v1h-1zM861 432h1v1h-1zM861 459h1v1h-1zM861 486h1v1h-1zM861 512h1v1h-1zM861 539h1v1h-1zM861 566h1v1h-1zM861 592h1v1h-1zM861 619h1v1h-1zM861 646h1v1h-1zM861 672h1v1h-1zM861 699h1v1h-1zM888 139h1v1h-1zM888 166h1v1h-1zM888 192h1v1h-1zM888 219h1v1h-1zM888 246h1v1h-1zM888 272h1v1h-1zM888 299h1v1h-1zM888 326h1v1h-1zM888 352h1v1h-1zM888 379h1v1h-1zM888 406h1v1h-1zM888 432h1v1h-1zM888 459h1v1h-1zM888 486h1v1h-1zM888 512h1v1h-1zM888 539h1v1h-1zM888 566h1v1h-1zM888 592h1v1h-1zM888 619h1v1h-1zM888 646h1v1h-1zM888 672h1v1h-1zM888 699h1v1h-1zM914 139h1v1h-1zM914 166h1v1h-1zM914 192h1v1h-1zM914 219h1v1h-1zM914 246h1v1h-1zM914 272h1v1h-1zM914 299h1v1h-1zM914 326h1v1h-1zM914 352h1v1h-1zM914 379h1v1h-1zM914 406h1v1h-1zM914 432h1v1h-1zM914 459h1v1h-1zM914 486h1v1h-1zM914 512h1v1h-1zM914 539h1v1h-1zM914 566h1v1h-1zM914 592h1v1h-1zM914 619h1v1h-1zM914 646h1v1h-1zM914 672h1v1h-1zM914 699h1v1h-1z" fill="#8c8c8c"/>
<rect x="195.4" y="220.4" width="76.2" height="235.0" rx="0" fill="none" stroke="#c2c2c2" stroke-width="1.6"/>
<rect x="272.2" y="220.4" width="75.8" height="235.0" rx="0" fill="none" stroke="#c2c2c2" stroke-width="1.6"/>
<rect x="347.9" y="220.3" width="201.5" height="157.5" rx="0" fill="none" stroke="#c2c2c2" stroke-width="1.6"/>
<rect x="549.1" y="220.2" width="129.1" height="180.4" rx="0" fill="none" stroke="#c2c2c2" stroke-width="1.6"/>
<rect x="679.4" y="220.7" width="78.8" height="40.6" rx="0" fill="none" stroke="#c2c2c2" stroke-width="1.6"/>
<rect x="759.8" y="220.4" width="77.1" height="40.2" rx="0" fill="none" stroke="#c2c2c2" stroke-width="1.6"/>
<rect x="679.6" y="263.4" width="78.1" height="38.8" rx="0" fill="none" stroke="#c2c2c2" stroke-width="1.6"/>
<rect x="679.4" y="304.5" width="71.2" height="72.8" rx="0" fill="none" stroke="#c2c2c2" stroke-width="1.6"/>
<rect x="348.8" y="377.8" width="155.6" height="195.1" rx="0" fill="none" stroke="#c2c2c2" stroke-width="1.6"/>
<rect x="195.3" y="456.2" width="145.2" height="114.8" rx="0" fill="none" stroke="#c2c2c2" stroke-width="1.6"/>
<rect x="504.6" y="402.4" width="78.2" height="40.4" rx="0" fill="none" stroke="#c2c2c2" stroke-width="1.6"/>
<rect x="584.9" y="402.4" width="76.6" height="40.4" rx="0" fill="none" stroke="#c2c2c2" stroke-width="1.6"/>
<rect x="504.6" y="442.8" width="79.3" height="41.0" rx="0" fill="none" stroke="#c2c2c2" stroke-width="1.6"/>
<polygon points="220.7,230.8 260.6,230.8 260.6,443.5 206.7,443.5 206.7,244.8 220.7,230.8" fill="none" stroke="#848484" stroke-width="1.8" stroke-linejoin="round" stroke-linecap="round"/>
<polygon points="297.8,230.8 337.7,230.8 337.7,443.5 283.8,443.5 283.8,244.8 297.8,230.8" fill="none" stroke="#848484" stroke-width="1.8" stroke-linejoin="round" stroke-linecap="round"/>
<rect x="385.7" y="236.0" width="125.8" height="126.0" rx="0" fill="none" stroke="#848484" stroke-width="1.8"/>
<circle cx="448.5" cy="299.2" r="42.7" fill="none" stroke="#848484" stroke-width="1.8"/>
<polygon points="579.3,231.0 666.6,231.0 666.6,390.0 560.5,390.0 560.5,250.0 579.3,231.0" fill="none" stroke="#848484" stroke-width="1.8" stroke-linejoin="round" stroke-linecap="round"/>
<polygon points="395.0,387.0 467.3,387.0 467.3,566.6 385.5,566.6 385.5,396.5 395.0,387.0" fill="none" stroke="#848484" stroke-width="2.2" stroke-linejoin="round" stroke-linecap="round"/>
<rect x="206.0" y="467.6" width="124.2" height="92.1" rx="0" fill="none" stroke="#848484" stroke-width="1.8"/>
<rect x="700.1" y="309.4" width="30.4" height="62.7" rx="0" fill="none" stroke="#848484" stroke-width="1.8"/>
<rect x="690.0" y="228.5" width="59.0" height="25.5" rx="0" fill="none" stroke="#848484" stroke-width="1.5"/>
<rect x="770.0" y="228.5" width="58.0" height="23.5" rx="0" fill="none" stroke="#848484" stroke-width="1.5"/>
<rect x="690.0" y="270.0" width="58.0" height="26.0" rx="0" fill="none" stroke="#848484" stroke-width="1.5"/>
<rect x="515.0" y="410.0" width="59.0" height="25.0" rx="0" fill="none" stroke="#848484" stroke-width="1.5"/>
<rect x="594.0" y="410.0" width="58.0" height="25.0" rx="0" fill="none" stroke="#848484" stroke-width="1.5"/>
<rect x="515.0" y="450.0" width="59.0" height="25.0" rx="0" fill="none" stroke="#848484" stroke-width="1.5"/>
<polyline points="205.2,258.0 205.2,230.8 234.7,230.8" fill="none" stroke="#008484" stroke-width="2.6" stroke-linejoin="round" stroke-linecap="round"/>
<rect x="205.2" y="284.5" width="56.7" height="161.1" rx="0" fill="none" stroke="#008484" stroke-width="2.6"/>
<polyline points="282.3,258.0 282.3,230.8 311.8,230.8" fill="none" stroke="#008484" stroke-width="2.6" stroke-linejoin="round" stroke-linecap="round"/>
<rect x="282.3" y="284.5" width="56.7" height="161.1" rx="0" fill="none" stroke="#008484" stroke-width="2.6"/>
<line x1="400.2" y1="230.3" x2="496.7" y2="230.3" stroke="#008484" stroke-width="2.6"/>
<line x1="400.2" y1="367.0" x2="496.7" y2="367.0" stroke="#008484" stroke-width="2.6"/>
<line x1="375.4" y1="282.8" x2="375.4" y2="315.3" stroke="#008484" stroke-width="2.6"/>
<line x1="522.0" y1="282.8" x2="522.0" y2="315.3" stroke="#008484" stroke-width="2.6"/>
<polyline points="559.0,258.1 559.0,230.3 587.7,230.3" fill="none" stroke="#008484" stroke-width="2.6" stroke-linejoin="round" stroke-linecap="round"/>
<polyline points="559.0,284.0 613.6,284.0 613.6,230.3 669.2,230.3 669.2,392.0 559.0,392.0 559.0,284.0" fill="none" stroke="#008484" stroke-width="2.6" stroke-linejoin="round" stroke-linecap="round"/>
<line x1="353.2" y1="383.2" x2="472.0" y2="383.2" stroke="#008484" stroke-width="3"/>
<line x1="382.0" y1="568.8" x2="472.0" y2="568.8" stroke="#008484" stroke-width="3"/>
<rect x="204.0" y="464.5" width="129.3" height="99.3" rx="0" fill="none" stroke="#008484" stroke-width="3"/>
<polyline points="258.0,464.5 258.0,477.0 217.4,477.0 217.4,551.0 319.8,551.0 319.8,477.0 278.5,477.0 278.5,464.5" fill="none" stroke="#008484" stroke-width="3" stroke-linejoin="round" stroke-linecap="round"/>
<line x1="204.0" y1="492.4" x2="217.4" y2="492.4" stroke="#008484" stroke-width="3"/>
<line x1="319.8" y1="492.4" x2="333.3" y2="492.4" stroke="#008484" stroke-width="3"/>
<line x1="204.0" y1="520.3" x2="217.4" y2="520.3" stroke="#008484" stroke-width="3"/>
<line x1="319.8" y1="520.3" x2="333.3" y2="520.3" stroke="#008484" stroke-width="3"/>
<rect x="266.0" y="539.0" width="5.2" height="12.0" rx="0" fill="#008484"/>
<polyline points="740.7,221.5 679.6,221.5 679.6,261.9 740.7,261.9" fill="none" stroke="#008484" stroke-width="3" stroke-linejoin="round" stroke-linecap="round"/>
<line x1="791.0" y1="225.0" x2="803.5" y2="225.0" stroke="#008484" stroke-width="2.6"/>
<line x1="791.0" y1="254.9" x2="803.5" y2="254.9" stroke="#008484" stroke-width="2.6"/>
<line x1="712.0" y1="268.0" x2="725.0" y2="268.0" stroke="#008484" stroke-width="2.6"/>
<line x1="712.0" y1="298.0" x2="725.0" y2="298.0" stroke="#008484" stroke-width="2.6"/>
<polyline points="685.2,306.8 731.8,306.8 731.8,328.0" fill="none" stroke="#008484" stroke-width="2.6" stroke-linejoin="round" stroke-linecap="round"/>
<polyline points="731.8,352.0 731.8,374.0 698.8,374.0" fill="none" stroke="#008484" stroke-width="2.6" stroke-linejoin="round" stroke-linecap="round"/>
<line x1="539.0" y1="404.5" x2="551.0" y2="404.5" stroke="#008484" stroke-width="2.6"/>
<line x1="539.0" y1="440.5" x2="551.0" y2="440.5" stroke="#008484" stroke-width="2.6"/>
<line x1="618.0" y1="404.5" x2="630.0" y2="404.5" stroke="#008484" stroke-width="2.6"/>
<line x1="618.0" y1="440.5" x2="630.0" y2="440.5" stroke="#008484" stroke-width="2.6"/>
<line x1="539.0" y1="444.5" x2="551.0" y2="444.5" stroke="#008484" stroke-width="2.6"/>
<line x1="539.0" y1="480.5" x2="551.0" y2="480.5" stroke="#008484" stroke-width="2.6"/>
<path d="M431.0 291.2L429.5 289.1L427.0 287.9L424.2 287.8L421.7 289.0L420.0 291.1L419.7 293.6L420.7 295.9L422.8 297.6L425.5 298.2L428.0 299.3L428.7 298.9L430.5 300.2L431.6 302.0L431.8 304.0L431.1 305.9L429.6 307.5L427.5 308.4L425.1 308.7L422.8 308.2L420.8 307.0L419.6 305.2M441.7 287.7L445.3 308.7L448.7 296.5L452.0 308.7L455.6 287.7M466.6 291.9L471.7 287.7L471.7 308.7M466.6 308.7L476.7 308.7" fill="none" stroke="#848484" stroke-width="2.60" stroke-linecap="round" stroke-linejoin="round"/>
<path d="M404.4 383.8L402.9 381.8L400.5 380.6L397.7 380.6L395.3 381.7L393.7 383.7L393.3 386.2L394.3 388.5L396.4 390.1L399.0 390.7L401.5 391.7L402.1 391.4L403.9 392.7L404.9 394.4L405.1 396.4L404.5 398.2L403.0 399.7L400.9 400.7L398.6 400.9L396.3 400.4L394.5 399.2L393.3 397.6M411.9 380.5L415.4 400.9L418.7 389.1L422.0 400.9L425.4 380.5M431.8 403.4L444.5 403.4M451.5 400.9L451.5 380.5L458.9 380.5L458.9 380.5L460.8 380.9L462.4 382.0L463.4 383.6L463.8 385.6L463.4 387.5L462.4 389.2L460.8 390.3L458.9 390.7L451.5 390.7M471.6 387.2L471.6 395.8L471.6 395.8L472.0 397.8L473.2 399.4L475.0 400.5L477.1 400.9L479.3 400.5L481.0 399.4L482.2 397.8L482.7 395.8M482.7 387.2L482.7 400.9M501.1 389.0L498.8 387.6L495.7 387.3L492.8 388.1L491.3 389.9L491.5 392.0L493.5 393.6L496.5 394.2L498.9 394.2L499.2 394.8L501.2 396.0L502.0 397.7L501.2 399.3L499.2 400.5L496.5 400.9L493.7 400.5L491.7 399.3M510.5 380.5L510.5 400.9M510.5 390.7L511.4 389.5L513.0 388.0L515.2 387.3L517.6 387.4L519.8 388.3L521.2 389.8L521.7 391.7L521.7 400.9" fill="none" stroke="#848484" stroke-width="2.53" stroke-linecap="round" stroke-linejoin="round"/>
<path d="M568.2 401.3L575.1 381.5L582.1 401.3M570.6 394.8L579.7 394.8M590.6 401.3L590.6 381.5L597.8 381.5L597.8 381.5L599.6 381.9L601.1 383.0L602.1 384.6L602.5 386.5L602.1 388.4L601.1 390.0L599.6 391.0L597.8 391.4L590.6 391.4M612.8 385.2L613.8 383.5L615.2 382.3L617.1 381.6L619.0 381.6L620.8 382.3L622.3 383.5L623.2 385.2L623.5 387.1L623.5 387.1L623.4 388.3L623.0 389.5L622.3 390.6L612.1 401.3L623.9 401.3M634.3 385.2L635.2 383.5L636.7 382.3L638.5 381.6L640.4 381.6L642.2 382.3L643.7 383.5L644.7 385.2L645.0 387.1L645.0 387.1L644.8 388.3L644.4 389.5L643.7 390.6L633.5 401.3L645.4 401.3M656.2 385.5L660.9 381.5L660.9 401.3M656.2 401.3L665.6 401.3M677.2 381.5L687.7 381.5L681.8 389.4L682.2 389.4L684.3 389.8L686.1 390.9L687.4 392.6L688.1 394.7L687.9 396.8L687.0 398.8L685.5 400.3L683.5 401.1L681.4 401.2L679.4 400.6L677.7 399.2L676.6 397.4M696.9 393.0L710.7 393.0M720.1 381.5L730.6 381.5L724.7 389.4L725.1 389.4L727.2 389.8L729.0 390.9L730.3 392.6L730.9 394.7L730.8 396.8L729.9 398.8L728.4 400.3L726.4 401.1L724.3 401.2L722.2 400.6L720.6 399.2L719.5 397.4M741.6 381.5L752.0 381.5L746.1 389.4L746.5 389.4L748.6 389.8L750.4 390.9L751.8 392.6L752.4 394.7L752.2 396.8L751.4 398.8L749.8 400.3L747.9 401.1L745.7 401.2L743.7 400.6L742.0 399.2L740.9 397.4M773.1 384.8L771.6 382.8L769.3 381.7L766.7 381.7L764.3 382.7L762.8 384.7L762.4 387.0L763.4 389.3L765.4 390.8L767.9 391.4L770.3 392.4L770.9 392.1L772.6 393.3L773.6 395.0L773.8 396.9L773.2 398.7L771.7 400.1L769.8 401.0L767.5 401.3L765.3 400.8L763.5 399.6L762.4 398.0M783.6 401.3L783.6 381.5L790.7 381.5L790.7 381.5L792.5 381.9L794.1 383.0L795.1 384.6L795.5 386.5L795.1 388.4L794.1 390.0L792.5 391.0L790.7 391.4L783.6 391.4M789.9 391.4L795.5 401.3M815.4 384.4L813.7 382.5L811.6 381.6L809.4 381.8L807.5 383.2L805.9 385.5L804.9 388.5L804.7 391.9L805.1 395.2L806.3 398.0L808.0 400.1L810.0 401.2L812.2 401.1L814.2 399.9L815.9 397.7L816.9 394.7L817.3 391.4L817.3 392.4L812.2 392.4M825.5 393.0L839.3 393.0M847.9 381.5L859.8 381.5L851.9 401.3" fill="none" stroke="#848484" stroke-width="2.44" stroke-linecap="round" stroke-linejoin="round"/>
<path d="M607.9 450.2L612.7 446.2L612.7 466.4M607.9 466.4L617.6 466.4M626.1 446.2L626.1 466.4M636.6 452.9L626.1 461.4M630.1 458.3L637.4 466.4" fill="none" stroke="#848484" stroke-width="2.51" stroke-linecap="round" stroke-linejoin="round"/>
<path d="M518.9 490.8L524.0 486.6L524.0 507.7M518.9 507.7L529.0 507.7M549.9 497.1L549.6 500.4L548.7 503.3L547.3 505.7L545.5 507.2L543.6 507.7L541.6 507.2L539.9 505.7L538.5 503.3L537.6 500.4L537.3 497.1L537.6 493.9L538.5 491.0L539.9 488.6L541.6 487.1L543.6 486.6L545.5 487.1L547.3 488.6L548.7 491.0L549.6 493.9L549.9 497.1M557.3 486.6L557.3 507.7M568.3 493.6L557.3 502.4M561.5 499.3L569.1 507.7" fill="none" stroke="#848484" stroke-width="2.61" stroke-linecap="round" stroke-linejoin="round"/>
<path d="M276.3 598.1L283.6 577.2L290.9 598.1M278.8 591.2L288.4 591.2M297.6 577.2L310.5 577.2M304.0 577.2L304.0 598.1M329.8 580.6L328.2 578.5L325.8 577.4L323.0 577.3L320.5 578.5L318.8 580.5L318.5 583.0L319.5 585.4L321.6 587.0L324.3 587.6L326.8 588.7L327.4 588.4L329.2 589.7L330.3 591.4L330.5 593.4L329.8 595.3L328.3 596.9L326.2 597.9L323.9 598.1L321.6 597.6L319.6 596.4L318.4 594.7M337.6 598.1L344.9 577.2L352.2 598.1M340.1 591.2L349.7 591.2M357.4 598.1L357.4 577.2L365.3 589.7L373.3 577.2L373.3 598.1M379.5 577.2L379.5 598.1L384.7 598.1L384.7 598.1L386.6 597.8L388.4 596.7L389.9 595.0L391.1 592.9L391.8 590.4L392.0 587.6L391.8 584.9L391.1 582.4L389.9 580.3L388.4 578.6L386.6 577.5L384.7 577.2L379.5 577.2M401.2 581.4L406.2 577.2L406.2 598.1M401.2 598.1L411.2 598.1M432.9 587.6L432.6 590.9L431.7 593.8L430.3 596.1L428.6 597.6L426.6 598.1L424.7 597.6L422.9 596.1L421.5 593.8L420.7 590.9L420.4 587.6L420.7 584.4L421.5 581.5L422.9 579.2L424.7 577.7L426.6 577.2L428.6 577.7L430.3 579.2L431.7 581.5L432.6 584.4L432.9 587.6M453.3 580.9L451.7 578.8L449.7 577.5L447.6 577.2L445.5 577.8L443.6 579.4L442.1 581.7L441.1 584.5L440.8 587.6L441.1 590.8L442.1 593.6L443.6 595.9L445.5 597.5L447.6 598.1L449.7 597.8L451.7 596.5L453.3 594.4M462.5 581.4L467.5 577.2L467.5 598.1M462.5 598.1L472.5 598.1M491.3 598.1L491.3 577.2L480.4 591.4L495.4 591.4M501.0 598.1L508.3 577.2L515.7 598.1M503.5 591.2L513.2 591.2M521.5 589.3L536.1 589.3M554.5 580.6L553.0 578.5L550.5 577.4L547.7 577.3L545.2 578.5L543.6 580.5L543.2 583.0L544.2 585.4L546.3 587.0L549.0 587.6L551.5 588.7L552.2 588.4L554.0 589.7L555.1 591.4L555.3 593.4L554.6 595.3L553.1 596.9L551.0 597.9L548.6 598.1L546.3 597.6L544.4 596.4L543.1 594.7M575.0 580.6L573.4 578.5L570.9 577.4L568.1 577.3L565.6 578.5L564.0 580.5L563.7 583.0L564.6 585.4L566.7 587.0L569.5 587.6L572.0 588.7L572.6 588.4L574.4 589.7L575.5 591.4L575.7 593.4L575.0 595.3L573.5 596.9L571.4 597.9L569.0 598.1L566.7 597.6L564.8 596.4L563.6 594.7" fill="none" stroke="#848484" stroke-width="2.58" stroke-linecap="round" stroke-linejoin="round"/>
<path d="M217.7 585.1L225.4 585.1L225.4 585.1L227.2 585.5L228.6 586.6L229.6 588.4L229.9 590.4L229.6 592.4L228.6 594.2L227.2 595.3L225.4 595.7L217.7 595.7L217.7 575.3L224.8 575.3L224.8 575.3L226.4 575.6L227.7 576.7L228.6 578.3L228.9 580.2L228.6 582.1L227.7 583.7L226.4 584.7L224.8 585.1M245.0 582.0L245.0 595.7M245.1 586.5L243.9 584.2L242.1 582.6L240.0 582.0L237.9 582.5L236.0 584.0L234.8 586.2L234.3 588.9L234.8 591.5L236.0 593.8L237.9 595.3L240.0 595.7L242.1 595.1L243.9 593.5L245.1 591.2M254.8 576.9L254.8 592.7L254.8 592.7L255.1 593.8L255.9 594.8L257.1 595.5L258.5 595.7L260.5 595.7M250.7 582.0L259.9 582.0M270.7 576.9L270.7 592.7L270.7 592.7L271.0 593.8L271.8 594.8L273.0 595.5L274.4 595.7L276.4 595.7M266.6 582.0L275.8 582.0M281.7 588.8L292.7 588.8L293.1 588.9L292.7 586.1L291.3 583.9L289.3 582.4L287.0 582.0L284.7 582.8L282.9 584.6L281.9 587.1L281.7 589.9L282.5 592.5L284.2 594.5L286.3 595.6L288.7 595.6L290.8 594.4L292.4 592.3M298.7 582.0L298.7 595.7M298.7 587.5L298.7 588.0L299.0 586.1L300.1 584.5L301.6 583.2L303.6 582.3L305.9 582.0L307.9 582.0M313.3 582.0L319.4 595.7M325.1 582.0L319.4 595.7L317.8 598.8L315.7 600.2L314.1 600.2" fill="none" stroke="#848484" stroke-width="2.53" stroke-linecap="round" stroke-linejoin="round"/>
<path d="M194.2 459.2L192.4 457.2L190.3 456.3L188.1 456.5L186.1 457.9L184.5 460.3L183.5 463.3L183.2 466.7L183.7 470.1L184.9 473.0L186.6 475.1L188.7 476.2L190.9 476.1L192.9 474.8L194.6 472.6L195.7 469.6L196.0 466.2L196.0 467.3L190.8 467.3M202.4 476.3L202.4 456.2L209.6 456.2L209.6 456.2L211.4 456.6L213.0 457.7L214.0 459.3L214.4 461.2L214.0 463.2L213.0 464.8L211.4 465.9L209.6 466.2L202.4 466.2M227.1 456.2L227.1 476.3M252.1 466.2L251.8 469.3L250.9 472.1L249.5 474.4L247.8 475.8L245.9 476.3L243.9 475.8L242.2 474.4L240.8 472.1L240.0 469.3L239.7 466.2L240.0 463.2L240.8 460.4L242.2 458.1L243.9 456.7L245.9 456.2L247.8 456.7L249.5 458.1L250.9 460.4L251.8 463.2L252.1 466.2M269.1 459.2L267.3 457.2L265.2 456.3L263.0 456.5L261.0 457.9L259.4 460.3L258.5 463.3L258.2 466.7L258.7 470.1L259.8 473.0L261.6 475.1L263.7 476.2L265.8 476.1L267.9 474.8L269.5 472.6L270.6 469.6L271.0 466.2L271.0 467.3L265.8 467.3M277.3 476.3L277.3 456.2L284.5 456.2L284.5 456.2L286.4 456.6L287.9 457.7L289.0 459.3L289.3 461.2L289.0 463.2L287.9 464.8L286.4 465.9L284.5 466.2L277.3 466.2M302.1 456.2L302.1 476.3M327.0 466.2L326.7 469.3L325.8 472.1L324.5 474.4L322.7 475.8L320.8 476.3L318.9 475.8L317.2 474.4L315.8 472.1L314.9 469.3L314.6 466.2L314.9 463.2L315.8 460.4L317.2 458.1L318.9 456.7L320.8 456.2L322.7 456.7L324.5 458.1L325.8 460.4L326.7 463.2L327.0 466.2M333.3 478.7L345.8 478.7" fill="none" stroke="#848484" stroke-width="2.48" stroke-linecap="round" stroke-linejoin="round"/>
<path d="M661.2 264.5L661.2 284.4L672.7 284.4" fill="none" stroke="#848484" stroke-width="2.45" stroke-linecap="round" stroke-linejoin="round"/>
<path d="M716.5 264.5L716.5 284.4L728.0 284.4" fill="none" stroke="#848484" stroke-width="2.45" stroke-linecap="round" stroke-linejoin="round"/>
<path d="M765.7 264.5L765.7 284.4L777.3 284.4" fill="none" stroke="#848484" stroke-width="2.45" stroke-linecap="round" stroke-linejoin="round"/>
<path d="M773.2 268.5L778.0 264.5L778.0 284.4M773.2 284.4L782.8 284.4M791.9 271.1L791.9 279.4L791.9 279.4L792.3 281.3L793.5 282.9L795.2 284.0L797.3 284.4L799.3 284.0L801.0 282.9L802.2 281.3L802.6 279.4M802.6 271.1L802.6 284.4M822.3 264.5L810.8 264.5L810.8 284.4M810.8 274.1L818.3 274.1" fill="none" stroke="#848484" stroke-width="2.45" stroke-linecap="round" stroke-linejoin="round"/>
<path d="M713.9 313.2L713.9 321.5L713.9 321.5L714.3 323.4L715.5 325.0L717.2 326.1L719.3 326.5L721.3 326.1L723.1 325.0L724.2 323.4L724.6 321.5M724.6 313.2L724.6 326.5M742.8 306.6L731.3 306.6L731.3 326.5M731.3 316.2L738.8 316.2" fill="none" stroke="#848484" stroke-width="2.45" stroke-linecap="round" stroke-linejoin="round"/>
<path d="M539.9 407.4L538.4 405.5L536.1 404.4L533.5 404.3L531.1 405.4L529.6 407.3L529.3 409.7L530.2 411.9L532.2 413.4L534.7 414.0L537.1 415.0L537.7 414.7L539.4 415.9L540.4 417.5L540.6 419.4L539.9 421.2L538.5 422.6L536.5 423.6L534.3 423.8L532.2 423.3L530.4 422.2L529.2 420.6M568.9 407.7L567.3 405.7L565.5 404.5L563.5 404.2L561.5 404.8L559.7 406.2L558.3 408.4L557.4 411.1L557.1 414.0L557.4 416.9L558.3 419.6L559.7 421.8L561.5 423.2L563.5 423.8L565.5 423.5L567.3 422.3L568.9 420.3M597.1 414.0L596.8 417.0L596.0 419.8L594.6 421.9L592.9 423.3L591.1 423.8L589.2 423.3L587.5 421.9L586.2 419.8L585.3 417.0L585.0 414.0L585.3 411.0L586.2 408.2L587.5 406.1L589.2 404.7L591.1 404.2L592.9 404.7L594.6 406.1L596.0 408.2L596.8 411.0L597.1 414.0M619.2 404.2L619.2 423.8M653.3 414.0L653.0 417.0L652.2 419.8L650.8 421.9L649.1 423.3L647.3 423.8L645.4 423.3L643.7 421.9L642.3 419.8L641.5 417.0L641.2 414.0L641.5 411.0L642.3 408.2L643.7 406.1L645.4 404.7L647.3 404.2L649.1 404.7L650.8 406.1L652.2 408.2L653.0 411.0L653.3 414.0M667.9 423.8L667.9 404.2L675.3 416.0L682.8 404.2L682.8 423.8" fill="none" stroke="#848484" stroke-width="2.42" stroke-linecap="round" stroke-linejoin="round"/>
<path d="M263.9 521.7L263.9 537.6L263.9 537.6L263.5 539.7L262.7 541.6L261.3 543.0L259.6 543.7L257.9 543.7L256.2 543.0L254.9 541.6L254.0 539.7M271.2 521.7L282.9 521.7L276.3 530.5L276.7 530.5L279.1 531.0L281.1 532.2L282.6 534.1L283.3 536.4L283.2 538.8L282.2 541.0L280.5 542.7L278.3 543.7L275.9 543.8L273.6 543.0L271.7 541.5L270.5 539.5" fill="none" stroke="#848484" stroke-width="2.74" stroke-linecap="round" stroke-linejoin="round"/>
<path d="M411.7 466.6L411.7 478.8L411.7 478.8L412.0 480.6L412.7 482.2L413.9 483.5L415.4 484.3L417.1 484.6L418.8 484.3L420.3 483.5L421.5 482.2L422.2 480.6L422.5 478.8L422.5 466.6M429.7 470.2L434.0 466.6L434.0 484.6M429.7 484.6L438.3 484.6" fill="none" stroke="#848484" stroke-width="2.22" stroke-linecap="round" stroke-linejoin="round"/>
<polyline points="221.9,329.2 244.4,329.2" fill="none" stroke="#848484" stroke-width="3" stroke-linejoin="round" stroke-linecap="round"/>
<polyline points="228.4,337.0 222.4,330.0" fill="none" stroke="#848484" stroke-width="2.2" stroke-linejoin="round" stroke-linecap="round"/>
<polyline points="243.4,330.0 243.4,337.0" fill="none" stroke="#848484" stroke-width="2.2" stroke-linejoin="round" stroke-linecap="round"/>
<polyline points="221.9,345.5 226.4,343.8 240.4,343.8 244.4,345.5" fill="none" stroke="#848484" stroke-width="3" stroke-linejoin="round" stroke-linecap="round"/>
<polyline points="299.0,329.2 321.5,329.2" fill="none" stroke="#848484" stroke-width="3" stroke-linejoin="round" stroke-linecap="round"/>
<polyline points="305.5,337.0 299.5,330.0" fill="none" stroke="#848484" stroke-width="2.2" stroke-linejoin="round" stroke-linecap="round"/>
<polyline points="320.5,330.0 320.5,337.0" fill="none" stroke="#848484" stroke-width="2.2" stroke-linejoin="round" stroke-linecap="round"/>
<polyline points="299.0,345.5 303.5,343.8 317.5,343.8 321.5,345.5" fill="none" stroke="#848484" stroke-width="3" stroke-linejoin="round" stroke-linecap="round"/>
<rect x="602" y="296" width="20" height="29" rx="9" fill="none" stroke="#848484" stroke-width="2.2"/>
<polyline points="602.0,308.0 622.0,308.0" fill="none" stroke="#848484" stroke-width="2.2" stroke-linejoin="round" stroke-linecap="round"/>
<polyline points="602.0,318.0 622.0,318.0" fill="none" stroke="#848484" stroke-width="2.2" stroke-linejoin="round" stroke-linecap="round"/>
<rect x="211.1" y="235.0" width="44.6" height="44.6" rx="4" fill="none" stroke="#c2c200" stroke-width="1"/>
<rect x="214.8" y="238.7" width="37.2" height="37.2" rx="0" fill="#840084"/>
<rect x="216.3" y="240.2" width="34.2" height="34.2" rx="0" fill="#c2c200"/>
<circle cx="233.4" cy="257.3" r="10.5" fill="#000"/>
<circle cx="233.4" cy="310.5" r="22" fill="none" stroke="#c2c200" stroke-width="1"/>
<circle cx="233.4" cy="310.5" r="19.1" fill="#840084"/>
<circle cx="233.4" cy="310.5" r="18.0" fill="#c2c200"/>
<circle cx="233.4" cy="310.5" r="10.5" fill="#000"/>
<circle cx="233.4" cy="363.8" r="22" fill="none" stroke="#c2c200" stroke-width="1"/>
<circle cx="233.4" cy="363.8" r="19.1" fill="#840084"/>
<circle cx="233.4" cy="363.8" r="18.0" fill="#c2c200"/>
<circle cx="233.4" cy="363.8" r="10.5" fill="#000"/>
<circle cx="233.4" cy="417.0" r="22" fill="none" stroke="#c2c200" stroke-width="1"/>
<circle cx="233.4" cy="417.0" r="19.1" fill="#840084"/>
<circle cx="233.4" cy="417.0" r="18.0" fill="#c2c200"/>
<circle cx="233.4" cy="417.0" r="10.5" fill="#000"/>
<rect x="288.2" y="235.0" width="44.6" height="44.6" rx="4" fill="none" stroke="#c2c200" stroke-width="1"/>
<rect x="291.9" y="238.7" width="37.2" height="37.2" rx="0" fill="#840084"/>
<rect x="293.4" y="240.2" width="34.2" height="34.2" rx="0" fill="#c2c200"/>
<circle cx="310.5" cy="257.3" r="10.5" fill="#000"/>
<circle cx="310.5" cy="310.5" r="22" fill="none" stroke="#c2c200" stroke-width="1"/>
<circle cx="310.5" cy="310.5" r="19.1" fill="#840084"/>
<circle cx="310.5" cy="310.5" r="18.0" fill="#c2c200"/>
<circle cx="310.5" cy="310.5" r="10.5" fill="#000"/>
<circle cx="310.5" cy="363.8" r="22" fill="none" stroke="#c2c200" stroke-width="1"/>
<circle cx="310.5" cy="363.8" r="19.1" fill="#840084"/>
<circle cx="310.5" cy="363.8" r="18.0" fill="#c2c200"/>
<circle cx="310.5" cy="363.8" r="10.5" fill="#000"/>
<circle cx="310.5" cy="417.0" r="22" fill="none" stroke="#c2c200" stroke-width="1"/>
<circle cx="310.5" cy="417.0" r="19.1" fill="#840084"/>
<circle cx="310.5" cy="417.0" r="18.0" fill="#c2c200"/>
<circle cx="310.5" cy="417.0" r="10.5" fill="#000"/>
<circle cx="380.7" cy="251.4" r="25" fill="none" stroke="#c2c200" stroke-width="1"/>
<circle cx="380.7" cy="251.4" r="21.8" fill="#840084"/>
<circle cx="380.7" cy="251.4" r="20.7" fill="#c2c200"/>
<circle cx="380.7" cy="251.4" r="12" fill="#000"/>
<circle cx="516.6" cy="251.4" r="25" fill="none" stroke="#c2c200" stroke-width="1"/>
<circle cx="516.6" cy="251.4" r="21.8" fill="#840084"/>
<circle cx="516.6" cy="251.4" r="20.7" fill="#c2c200"/>
<circle cx="516.6" cy="251.4" r="12" fill="#000"/>
<circle cx="380.7" cy="345.2" r="25" fill="none" stroke="#c2c200" stroke-width="1"/>
<circle cx="380.7" cy="345.2" r="21.8" fill="#840084"/>
<circle cx="380.7" cy="345.2" r="20.7" fill="#c2c200"/>
<circle cx="380.7" cy="345.2" r="12" fill="#000"/>
<circle cx="516.6" cy="345.2" r="25" fill="none" stroke="#c2c200" stroke-width="1"/>
<circle cx="516.6" cy="345.2" r="21.8" fill="#840084"/>
<circle cx="516.6" cy="345.2" r="20.7" fill="#c2c200"/>
<circle cx="516.6" cy="345.2" r="12" fill="#000"/>
<rect x="564.6" y="234.3" width="46.2" height="46.2" rx="4" fill="none" stroke="#c2c200" stroke-width="1"/>
<rect x="568.3" y="238.0" width="38.8" height="38.8" rx="0" fill="#840084"/>
<rect x="569.8" y="239.5" width="35.8" height="35.8" rx="0" fill="#c2c200"/>
<circle cx="587.7" cy="257.4" r="10.3" fill="#000"/>
<circle cx="640.7" cy="257.4" r="22.3" fill="none" stroke="#c2c200" stroke-width="1"/>
<circle cx="640.7" cy="257.4" r="18.3" fill="#840084"/>
<circle cx="640.7" cy="257.4" r="17.2" fill="#c2c200"/>
<circle cx="640.7" cy="257.4" r="10.3" fill="#000"/>
<circle cx="587.7" cy="310.6" r="22.3" fill="none" stroke="#c2c200" stroke-width="1"/>
<circle cx="587.7" cy="310.6" r="18.3" fill="#840084"/>
<circle cx="587.7" cy="310.6" r="17.2" fill="#c2c200"/>
<circle cx="587.7" cy="310.6" r="10.3" fill="#000"/>
<circle cx="640.7" cy="310.6" r="22.3" fill="none" stroke="#c2c200" stroke-width="1"/>
<circle cx="640.7" cy="310.6" r="18.3" fill="#840084"/>
<circle cx="640.7" cy="310.6" r="17.2" fill="#c2c200"/>
<circle cx="640.7" cy="310.6" r="10.3" fill="#000"/>
<circle cx="587.7" cy="363.8" r="22.3" fill="none" stroke="#c2c200" stroke-width="1"/>
<circle cx="587.7" cy="363.8" r="18.3" fill="#840084"/>
<circle cx="587.7" cy="363.8" r="17.2" fill="#c2c200"/>
<circle cx="587.7" cy="363.8" r="10.3" fill="#000"/>
<circle cx="640.7" cy="363.8" r="22.3" fill="none" stroke="#c2c200" stroke-width="1"/>
<circle cx="640.7" cy="363.8" r="18.3" fill="#840084"/>
<circle cx="640.7" cy="363.8" r="17.2" fill="#c2c200"/>
<circle cx="640.7" cy="363.8" r="10.3" fill="#000"/>
<rect x="230.5" y="479.6" width="33.9" height="45.3" rx="12" fill="none" stroke="#c2c200" stroke-width="1"/>
<rect x="233.2" y="481.9" width="28.5" height="40.3" rx="9" fill="#840084"/>
<rect x="234.7" y="483.4" width="25.5" height="37.3" rx="8" fill="#c2c200"/>
<circle cx="245.3" cy="501.7" r="5.8" fill="#000"/>
<ellipse cx="289.6" cy="502.2" rx="17.2" ry="22.7" fill="none" stroke="#c2c200" stroke-width="1"/>
<ellipse cx="289.6" cy="502.2" rx="14.1" ry="20.1" fill="#840084"/>
<ellipse cx="289.6" cy="502.2" rx="12.6" ry="18.6" fill="#c2c200"/>
<circle cx="286.7" cy="501.7" r="5.8" fill="#000"/>
<rect x="350.2" y="386.1" width="39.8" height="20.8" rx="3.0" fill="none" stroke="#a00000" stroke-width="1"/>
<rect x="352.4" y="388.3" width="35.4" height="16.4" rx="0" fill="#840084"/>
<rect x="353.9" y="389.8" width="32.4" height="13.4" rx="0" fill="#840000"/>
<rect x="350.2" y="412.7" width="39.8" height="20.8" rx="3.0" fill="none" stroke="#a00000" stroke-width="1"/>
<rect x="352.4" y="414.9" width="35.4" height="16.4" rx="0" fill="#840084"/>
<rect x="353.9" y="416.4" width="32.4" height="13.4" rx="0" fill="#840000"/>
<rect x="350.2" y="439.4" width="39.8" height="20.8" rx="3.0" fill="none" stroke="#a00000" stroke-width="1"/>
<rect x="352.4" y="441.6" width="35.4" height="16.4" rx="0" fill="#840084"/>
<rect x="353.9" y="443.1" width="32.4" height="13.4" rx="0" fill="#840000"/>
<rect x="350.2" y="466.0" width="39.8" height="20.8" rx="3.0" fill="none" stroke="#a00000" stroke-width="1"/>
<rect x="352.4" y="468.2" width="35.4" height="16.4" rx="0" fill="#840084"/>
<rect x="353.9" y="469.7" width="32.4" height="13.4" rx="0" fill="#840000"/>
<rect x="350.2" y="492.6" width="39.8" height="20.8" rx="3.0" fill="none" stroke="#a00000" stroke-width="1"/>
<rect x="352.4" y="494.8" width="35.4" height="16.4" rx="0" fill="#840084"/>
<rect x="353.9" y="496.3" width="32.4" height="13.4" rx="0" fill="#840000"/>
<rect x="350.2" y="519.2" width="39.8" height="20.8" rx="3.0" fill="none" stroke="#a00000" stroke-width="1"/>
<rect x="352.4" y="521.5" width="35.4" height="16.4" rx="0" fill="#840084"/>
<rect x="353.9" y="523.0" width="32.4" height="13.4" rx="0" fill="#840000"/>
<rect x="350.2" y="545.9" width="39.8" height="20.8" rx="3.0" fill="none" stroke="#a00000" stroke-width="1"/>
<rect x="352.4" y="548.1" width="35.4" height="16.4" rx="0" fill="#840084"/>
<rect x="353.9" y="549.6" width="32.4" height="13.4" rx="0" fill="#840000"/>
<rect x="464.0" y="386.1" width="39.0" height="20.8" rx="3.0" fill="none" stroke="#a00000" stroke-width="1"/>
<rect x="466.2" y="388.3" width="34.6" height="16.4" rx="0" fill="#840084"/>
<rect x="467.7" y="389.8" width="31.6" height="13.4" rx="0" fill="#840000"/>
<rect x="464.0" y="412.7" width="39.0" height="20.8" rx="3.0" fill="none" stroke="#a00000" stroke-width="1"/>
<rect x="466.2" y="414.9" width="34.6" height="16.4" rx="0" fill="#840084"/>
<rect x="467.7" y="416.4" width="31.6" height="13.4" rx="0" fill="#840000"/>
<rect x="464.0" y="439.4" width="39.0" height="20.8" rx="3.0" fill="none" stroke="#a00000" stroke-width="1"/>
<rect x="466.2" y="441.6" width="34.6" height="16.4" rx="0" fill="#840084"/>
<rect x="467.7" y="443.1" width="31.6" height="13.4" rx="0" fill="#840000"/>
<rect x="464.0" y="466.0" width="39.0" height="20.8" rx="3.0" fill="none" stroke="#a00000" stroke-width="1"/>
<rect x="466.2" y="468.2" width="34.6" height="16.4" rx="0" fill="#840084"/>
<rect x="467.7" y="469.7" width="31.6" height="13.4" rx="0" fill="#840000"/>
<rect x="464.0" y="492.6" width="39.0" height="20.8" rx="3.0" fill="none" stroke="#a00000" stroke-width="1"/>
<rect x="466.2" y="494.8" width="34.6" height="16.4" rx="0" fill="#840084"/>
<rect x="467.7" y="496.3" width="31.6" height="13.4" rx="0" fill="#840000"/>
<rect x="464.0" y="519.2" width="39.0" height="20.8" rx="3.0" fill="none" stroke="#a00000" stroke-width="1"/>
<rect x="466.2" y="521.5" width="34.6" height="16.4" rx="0" fill="#840084"/>
<rect x="467.7" y="523.0" width="31.6" height="13.4" rx="0" fill="#840000"/>
<rect x="464.0" y="545.9" width="39.0" height="20.8" rx="3.0" fill="none" stroke="#a00000" stroke-width="1"/>
<rect x="466.2" y="548.1" width="34.6" height="16.4" rx="0" fill="#840084"/>
<rect x="467.7" y="549.6" width="31.6" height="13.4" rx="0" fill="#840000"/>
<rect x="682.2" y="222.0" width="31.9" height="37.7" rx="9.0" fill="none" stroke="#a00000" stroke-width="1"/>
<rect x="684.4" y="224.2" width="27.5" height="33.3" rx="6" fill="#840084"/>
<rect x="685.9" y="225.7" width="24.5" height="30.3" rx="5" fill="#840000"/>
<rect x="725.2" y="222.0" width="31.7" height="37.7" rx="9.0" fill="none" stroke="#a00000" stroke-width="1"/>
<rect x="727.4" y="224.2" width="27.3" height="33.3" rx="6" fill="#840084"/>
<rect x="728.9" y="225.7" width="24.3" height="30.3" rx="5" fill="#840000"/>
<rect x="760.2" y="220.8" width="32.7" height="37.9" rx="9.0" fill="none" stroke="#a00000" stroke-width="1"/>
<rect x="762.4" y="223.0" width="28.3" height="33.5" rx="6" fill="#840084"/>
<rect x="763.9" y="224.5" width="25.3" height="30.5" rx="5" fill="#840000"/>
<rect x="803.3" y="220.8" width="32.4" height="37.9" rx="9.0" fill="none" stroke="#a00000" stroke-width="1"/>
<rect x="805.5" y="223.0" width="28.0" height="33.5" rx="6" fill="#840084"/>
<rect x="807.0" y="224.5" width="25.0" height="30.5" rx="5" fill="#840000"/>
<rect x="681.3" y="264.0" width="31.7" height="37.8" rx="9.0" fill="none" stroke="#a00000" stroke-width="1"/>
<rect x="683.5" y="266.2" width="27.3" height="33.4" rx="6" fill="#840084"/>
<rect x="685.0" y="267.7" width="24.3" height="30.4" rx="5" fill="#840000"/>
<rect x="724.1" y="264.0" width="31.5" height="37.8" rx="9.0" fill="none" stroke="#a00000" stroke-width="1"/>
<rect x="726.3" y="266.2" width="27.1" height="33.4" rx="6" fill="#840084"/>
<rect x="727.8" y="267.7" width="24.1" height="30.4" rx="5" fill="#840000"/>
<rect x="507.4" y="403.6" width="30.8" height="38.1" rx="9.0" fill="none" stroke="#a00000" stroke-width="1"/>
<rect x="509.6" y="405.8" width="26.4" height="33.7" rx="6" fill="#840084"/>
<rect x="511.1" y="407.3" width="23.4" height="30.7" rx="5" fill="#840000"/>
<rect x="549.8" y="403.6" width="31.9" height="38.1" rx="9.0" fill="none" stroke="#a00000" stroke-width="1"/>
<rect x="552.0" y="405.8" width="27.5" height="33.7" rx="6" fill="#840084"/>
<rect x="553.5" y="407.3" width="24.5" height="30.7" rx="5" fill="#840000"/>
<rect x="586.0" y="403.6" width="30.9" height="38.1" rx="9.0" fill="none" stroke="#a00000" stroke-width="1"/>
<rect x="588.2" y="405.8" width="26.5" height="33.7" rx="6" fill="#840084"/>
<rect x="589.7" y="407.3" width="23.5" height="30.7" rx="5" fill="#840000"/>
<rect x="627.4" y="403.6" width="32.9" height="38.1" rx="9.0" fill="none" stroke="#a00000" stroke-width="1"/>
<rect x="629.6" y="405.8" width="28.5" height="33.7" rx="6" fill="#840084"/>
<rect x="631.1" y="407.3" width="25.5" height="30.7" rx="5" fill="#840000"/>
<rect x="507.4" y="442.9" width="30.8" height="39.1" rx="9.0" fill="none" stroke="#a00000" stroke-width="1"/>
<rect x="509.6" y="445.1" width="26.4" height="34.7" rx="6" fill="#840084"/>
<rect x="511.1" y="446.6" width="23.4" height="31.7" rx="5" fill="#840000"/>
<rect x="549.8" y="442.9" width="31.9" height="39.1" rx="9.0" fill="none" stroke="#a00000" stroke-width="1"/>
<rect x="552.0" y="445.1" width="27.5" height="34.7" rx="6" fill="#840084"/>
<rect x="553.5" y="446.6" width="24.5" height="31.7" rx="5" fill="#840000"/>
<rect x="681.0" y="308.1" width="27.0" height="24.4" rx="3.0" fill="none" stroke="#a00000" stroke-width="1"/>
<rect x="683.2" y="310.3" width="22.6" height="20.0" rx="0" fill="#840084"/>
<rect x="684.7" y="311.8" width="19.6" height="17.0" rx="0" fill="#840000"/>
<rect x="681.0" y="347.8" width="27.0" height="24.8" rx="3.0" fill="none" stroke="#a00000" stroke-width="1"/>
<rect x="683.2" y="350.0" width="22.6" height="20.4" rx="0" fill="#840084"/>
<rect x="684.7" y="351.5" width="19.6" height="17.4" rx="0" fill="#840000"/>
<rect x="723.0" y="328.1" width="27.0" height="24.7" rx="3.0" fill="none" stroke="#a00000" stroke-width="1"/>
<rect x="725.2" y="330.3" width="22.6" height="20.3" rx="0" fill="#840084"/>
<rect x="726.7" y="331.8" width="19.6" height="17.3" rx="0" fill="#840000"/>
<path d="M231.1 245.5L233.4 243.6L233.4 253.1M231.1 253.1L235.7 253.1" fill="none" stroke="#ffffff" stroke-width="1.50" stroke-linecap="round" stroke-linejoin="round"/>
<path d="M221.9 264.9L221.4 264.4L220.9 264.2L220.3 264.2L219.8 264.6L219.3 265.2L219.1 266.0L219.0 266.9L219.1 267.8L219.4 268.6L219.9 269.1L220.4 269.4L221.0 269.4L221.6 269.1L222.0 268.5L222.3 267.7L222.4 266.8L222.4 267.1L221.0 267.1M224.3 269.5L224.3 264.2L226.2 264.2L226.2 264.2L226.7 264.3L227.1 264.5L227.4 265.0L227.5 265.5L227.4 266.0L227.1 266.4L226.7 266.7L226.2 266.8L224.3 266.8M231.0 264.2L231.0 269.5M237.8 266.8L237.8 267.6L237.5 268.4L237.2 268.9L236.7 269.3L236.2 269.5L235.7 269.3L235.2 268.9L234.9 268.4L234.6 267.6L234.6 266.8L234.6 266.0L234.9 265.2L235.2 264.7L235.7 264.3L236.2 264.2L236.7 264.3L237.2 264.7L237.5 265.2L237.8 266.0L237.8 266.8M239.7 270.1L243.0 270.1M245.3 265.2L246.5 264.2L246.5 269.5M245.3 269.5L247.8 269.5" fill="none" stroke="#eeeecc" stroke-width="1.20" stroke-linecap="round" stroke-linejoin="round"/>
<path d="M230.9 298.5L231.4 297.7L232.1 297.1L232.9 296.8L233.9 296.8L234.7 297.1L235.4 297.7L235.9 298.5L236.1 299.4L236.1 299.4L236.0 300.0L235.8 300.6L235.4 301.1L230.5 306.2L236.2 306.2" fill="none" stroke="#ffffff" stroke-width="1.50" stroke-linecap="round" stroke-linejoin="round"/>
<path d="M221.9 318.1L221.4 317.6L220.9 317.4L220.3 317.4L219.8 317.8L219.3 318.4L219.1 319.2L219.0 320.1L219.1 321.0L219.4 321.8L219.9 322.3L220.4 322.6L221.0 322.6L221.6 322.3L222.0 321.7L222.3 320.9L222.4 320.0L222.4 320.3L221.0 320.3M224.2 322.7L224.2 317.4L226.1 317.4L226.1 317.4L226.6 317.5L227.0 317.7L227.3 318.2L227.4 318.7L227.3 319.2L227.0 319.6L226.6 319.9L226.1 320.0L224.2 320.0M230.9 317.4L230.9 322.7M237.6 320.0L237.6 320.8L237.3 321.6L237.0 322.1L236.5 322.5L236.0 322.7L235.5 322.5L235.0 322.1L234.7 321.6L234.4 320.8L234.4 320.0L234.4 319.2L234.7 318.4L235.0 317.9L235.5 317.5L236.0 317.4L236.5 317.5L237.0 317.9L237.3 318.4L237.6 319.2L237.6 320.0M239.5 323.3L242.7 323.3M244.8 318.3L245.1 317.9L245.5 317.5L246.0 317.4L246.5 317.4L247.0 317.5L247.3 317.9L247.6 318.3L247.7 318.8L247.7 318.8L247.7 319.2L247.5 319.5L247.3 319.8L244.6 322.7L247.8 322.7" fill="none" stroke="#eeeecc" stroke-width="1.20" stroke-linecap="round" stroke-linejoin="round"/>
<path d="M230.9 350.1L236.0 350.1L233.1 353.9L233.3 353.9L234.3 354.0L235.2 354.6L235.9 355.4L236.2 356.4L236.1 357.4L235.7 358.3L234.9 359.1L234.0 359.5L233.0 359.5L232.0 359.2L231.2 358.6L230.6 357.7" fill="none" stroke="#ffffff" stroke-width="1.50" stroke-linecap="round" stroke-linejoin="round"/>
<path d="M221.9 371.4L221.4 370.9L220.9 370.7L220.3 370.7L219.8 371.1L219.3 371.7L219.1 372.5L219.0 373.4L219.1 374.3L219.4 375.1L219.9 375.6L220.4 375.9L221.0 375.9L221.6 375.6L222.0 375.0L222.3 374.2L222.4 373.3L222.4 373.6L221.0 373.6M224.2 376.0L224.2 370.7L226.1 370.7L226.1 370.7L226.6 370.8L227.0 371.0L227.3 371.5L227.4 372.0L227.3 372.5L227.0 372.9L226.6 373.2L226.1 373.3L224.2 373.3M230.9 370.7L230.9 376.0M237.7 373.3L237.6 374.1L237.4 374.9L237.0 375.4L236.5 375.8L236.0 376.0L235.5 375.8L235.1 375.4L234.7 374.9L234.5 374.1L234.4 373.3L234.5 372.5L234.7 371.7L235.1 371.2L235.5 370.8L236.0 370.7L236.5 370.8L237.0 371.2L237.4 371.7L237.6 372.5L237.7 373.3M239.5 376.6L242.8 376.6M244.9 370.7L247.7 370.7L246.1 372.8L246.2 372.8L246.8 372.9L247.3 373.2L247.6 373.6L247.8 374.2L247.8 374.7L247.5 375.3L247.1 375.7L246.6 375.9L246.0 375.9L245.5 375.8L245.0 375.4L244.7 374.9" fill="none" stroke="#eeeecc" stroke-width="1.20" stroke-linecap="round" stroke-linejoin="round"/>
<path d="M234.9 412.8L234.9 403.2L230.0 409.7L236.8 409.7" fill="none" stroke="#ffffff" stroke-width="1.50" stroke-linecap="round" stroke-linejoin="round"/>
<path d="M221.9 424.6L221.4 424.1L220.9 423.9L220.3 423.9L219.8 424.3L219.3 424.9L219.1 425.7L219.0 426.6L219.1 427.5L219.4 428.3L219.9 428.8L220.4 429.1L221.0 429.1L221.6 428.8L222.0 428.2L222.3 427.4L222.4 426.5L222.4 426.8L221.0 426.8M224.1 429.2L224.1 423.9L226.1 423.9L226.1 423.9L226.5 424.0L227.0 424.2L227.2 424.7L227.3 425.2L227.2 425.7L227.0 426.1L226.5 426.4L226.1 426.5L224.1 426.5M230.8 423.9L230.8 429.2M237.5 426.5L237.4 427.3L237.1 428.1L236.8 428.6L236.3 429.0L235.8 429.2L235.3 429.0L234.8 428.6L234.5 428.1L234.3 427.3L234.2 426.5L234.3 425.7L234.5 424.9L234.8 424.4L235.3 424.0L235.8 423.9L236.3 424.0L236.8 424.4L237.1 424.9L237.4 425.7L237.5 426.5M239.2 429.8L242.5 429.8M246.7 429.2L246.7 423.9L244.0 427.5L247.8 427.5" fill="none" stroke="#eeeecc" stroke-width="1.20" stroke-linecap="round" stroke-linejoin="round"/>
<path d="M308.2 245.5L310.5 243.6L310.5 253.1M308.2 253.1L312.8 253.1" fill="none" stroke="#ffffff" stroke-width="1.50" stroke-linecap="round" stroke-linejoin="round"/>
<path d="M299.0 264.9L298.5 264.4L298.0 264.2L297.4 264.2L296.9 264.6L296.4 265.2L296.2 266.0L296.1 266.9L296.2 267.8L296.5 268.6L297.0 269.1L297.5 269.4L298.1 269.4L298.7 269.1L299.1 268.5L299.4 267.7L299.5 266.8L299.5 267.1L298.1 267.1M301.3 269.5L301.3 264.2L303.2 264.2L303.2 264.2L303.7 264.3L304.1 264.5L304.4 265.0L304.5 265.5L304.4 266.0L304.1 266.4L303.7 266.7L303.2 266.8L301.3 266.8M308.0 264.2L308.0 269.5M314.8 266.8L314.7 267.6L314.5 268.4L314.1 268.9L313.7 269.3L313.1 269.5L312.6 269.3L312.2 268.9L311.8 268.4L311.6 267.6L311.5 266.8L311.6 266.0L311.8 265.2L312.2 264.7L312.6 264.3L313.1 264.2L313.7 264.3L314.1 264.7L314.5 265.2L314.7 266.0L314.8 266.8M316.6 270.1L319.9 270.1M324.7 264.2L322.1 264.2L321.9 266.5L322.3 266.5L322.9 266.1L323.5 266.1L324.1 266.3L324.6 266.7L324.9 267.4L324.9 268.0L324.7 268.7L324.2 269.2L323.6 269.4L323.0 269.4L322.4 269.1L322.0 268.6" fill="none" stroke="#eeeecc" stroke-width="1.20" stroke-linecap="round" stroke-linejoin="round"/>
<path d="M308.0 298.5L308.5 297.7L309.2 297.1L310.0 296.8L311.0 296.8L311.8 297.1L312.5 297.7L313.0 298.5L313.2 299.4L313.2 299.4L313.1 300.0L312.9 300.6L312.5 301.1L307.7 306.2L313.4 306.2" fill="none" stroke="#ffffff" stroke-width="1.50" stroke-linecap="round" stroke-linejoin="round"/>
<path d="M299.0 318.1L298.5 317.6L298.0 317.4L297.4 317.4L296.9 317.8L296.4 318.4L296.2 319.2L296.1 320.1L296.2 321.0L296.5 321.8L297.0 322.3L297.5 322.6L298.1 322.6L298.7 322.3L299.1 321.7L299.4 320.9L299.5 320.0L299.5 320.3L298.1 320.3M301.3 322.7L301.3 317.4L303.2 317.4L303.2 317.4L303.7 317.5L304.1 317.7L304.4 318.2L304.5 318.7L304.4 319.2L304.1 319.6L303.7 319.9L303.2 320.0L301.3 320.0M308.0 317.4L308.0 322.7M314.7 320.0L314.7 320.8L314.4 321.6L314.1 322.1L313.6 322.5L313.1 322.7L312.6 322.5L312.1 322.1L311.8 321.6L311.5 320.8L311.5 320.0L311.5 319.2L311.8 318.4L312.1 317.9L312.6 317.5L313.1 317.4L313.6 317.5L314.1 317.9L314.4 318.4L314.7 319.2L314.7 320.0M316.6 323.3L319.8 323.3M324.9 321.0L324.8 321.6L324.4 322.2L323.9 322.5L323.3 322.7L322.7 322.5L322.2 322.2L321.8 321.6L321.7 321.0L321.8 320.3L322.2 319.8L322.7 319.4L323.3 319.3L323.9 319.4L324.4 319.8L324.8 320.3L324.9 321.0M321.7 321.0L321.7 320.7L321.8 320.4L324.1 317.4" fill="none" stroke="#eeeecc" stroke-width="1.20" stroke-linecap="round" stroke-linejoin="round"/>
<path d="M308.0 350.1L313.1 350.1L310.2 353.9L310.4 353.9L311.4 354.0L312.3 354.6L313.0 355.4L313.3 356.4L313.2 357.4L312.8 358.3L312.0 359.1L311.1 359.5L310.1 359.5L309.1 359.2L308.3 358.6L307.7 357.7" fill="none" stroke="#ffffff" stroke-width="1.50" stroke-linecap="round" stroke-linejoin="round"/>
<path d="M299.0 371.4L298.5 370.9L298.0 370.7L297.4 370.7L296.9 371.1L296.4 371.7L296.2 372.5L296.1 373.4L296.2 374.3L296.5 375.1L297.0 375.6L297.5 375.9L298.1 375.9L298.7 375.6L299.1 375.0L299.4 374.2L299.5 373.3L299.5 373.6L298.1 373.6M301.3 376.0L301.3 370.7L303.2 370.7L303.2 370.7L303.7 370.8L304.1 371.0L304.4 371.5L304.5 372.0L304.4 372.5L304.1 372.9L303.7 373.2L303.2 373.3L301.3 373.3M308.0 370.7L308.0 376.0M314.7 373.3L314.7 374.1L314.4 374.9L314.1 375.4L313.6 375.8L313.1 376.0L312.6 375.8L312.1 375.4L311.8 374.9L311.5 374.1L311.5 373.3L311.5 372.5L311.8 371.7L312.1 371.2L312.6 370.8L313.1 370.7L313.6 370.8L314.1 371.2L314.4 371.7L314.7 372.5L314.7 373.3M316.6 376.6L319.8 376.6M321.7 370.7L324.9 370.7L322.8 376.0" fill="none" stroke="#eeeecc" stroke-width="1.20" stroke-linecap="round" stroke-linejoin="round"/>
<path d="M312.0 412.8L312.0 403.2L307.1 409.7L313.9 409.7" fill="none" stroke="#ffffff" stroke-width="1.50" stroke-linecap="round" stroke-linejoin="round"/>
<path d="M299.0 424.6L298.5 424.1L298.0 423.9L297.4 423.9L296.9 424.3L296.4 424.9L296.2 425.7L296.1 426.6L296.2 427.5L296.5 428.3L297.0 428.8L297.5 429.1L298.1 429.1L298.7 428.8L299.1 428.2L299.4 427.4L299.5 426.5L299.5 426.8L298.1 426.8M301.3 429.2L301.3 423.9L303.2 423.9L303.2 423.9L303.7 424.0L304.1 424.2L304.4 424.7L304.5 425.2L304.4 425.7L304.1 426.1L303.7 426.4L303.2 426.5L301.3 426.5M308.0 423.9L308.0 429.2M314.7 426.5L314.7 427.3L314.4 428.1L314.1 428.6L313.6 429.0L313.1 429.2L312.6 429.0L312.1 428.6L311.8 428.1L311.5 427.3L311.5 426.5L311.5 425.7L311.8 424.9L312.1 424.4L312.6 424.0L313.1 423.9L313.6 424.0L314.1 424.4L314.4 424.9L314.7 425.7L314.7 426.5M316.6 429.8L319.8 429.8M324.6 425.2L324.5 425.7L324.1 426.2L323.6 426.5L323.0 426.5L322.5 426.2L322.1 425.7L322.0 425.2L322.1 424.6L322.5 424.1L323.0 423.9L323.6 423.9L324.1 424.1L324.5 424.6L324.6 425.2M324.9 427.8L324.8 428.3L324.4 428.7L323.9 429.0L323.3 429.2L322.7 429.0L322.2 428.7L321.8 428.3L321.7 427.8L321.8 427.2L322.2 426.8L322.7 426.5L323.3 426.4L323.9 426.5L324.4 426.8L324.8 427.2L324.9 427.8" fill="none" stroke="#eeeecc" stroke-width="1.20" stroke-linecap="round" stroke-linejoin="round"/>
<path d="M377.9 237.4L380.7 235.0L380.7 246.8M377.9 246.8L383.5 246.8" fill="none" stroke="#ffffff" stroke-width="1.80" stroke-linecap="round" stroke-linejoin="round"/>
<path d="M364.2 258.1L364.2 264.4M364.2 260.6L364.2 260.8L364.4 260.0L364.8 259.2L365.6 258.6L366.5 258.2L367.5 258.1L368.5 258.1M370.8 261.2L376.0 261.2L376.1 261.3L375.9 260.0L375.3 258.9L374.4 258.3L373.3 258.1L372.2 258.5L371.4 259.3L370.9 260.4L370.9 261.7L371.2 263.0L372.0 263.9L373.0 264.4L374.1 264.4L375.1 263.8L375.8 262.9M382.7 258.9L381.6 258.2L380.2 258.1L378.9 258.5L378.1 259.3L378.3 260.3L379.2 261.0L380.6 261.3L381.7 261.3L381.8 261.6L382.8 262.2L383.1 262.9L382.8 263.7L381.8 264.2L380.6 264.4L379.3 264.2L378.3 263.7M385.1 261.2L390.2 261.2L390.4 261.3L390.2 260.0L389.6 258.9L388.7 258.3L387.6 258.1L386.5 258.5L385.7 259.3L385.2 260.4L385.1 261.7L385.5 263.0L386.3 263.9L387.3 264.4L388.4 264.4L389.4 263.8L390.1 262.9M394.5 255.7L394.5 263.0L394.5 263.0L394.7 263.6L395.0 264.0L395.6 264.3L396.3 264.4L397.2 264.4M392.6 258.1L396.9 258.1" fill="none" stroke="#eeeecc" stroke-width="1.50" stroke-linecap="round" stroke-linejoin="round"/>
<path d="M513.8 237.4L516.6 235.0L516.6 246.8M513.8 246.8L519.4 246.8" fill="none" stroke="#ffffff" stroke-width="1.80" stroke-linecap="round" stroke-linejoin="round"/>
<path d="M500.1 258.1L500.1 264.4M500.1 260.6L500.1 260.8L500.3 260.0L500.7 259.2L501.5 258.6L502.4 258.2L503.4 258.1L504.4 258.1M506.7 261.2L511.9 261.2L512.0 261.3L511.8 260.0L511.2 258.9L510.3 258.3L509.2 258.1L508.1 258.5L507.3 259.3L506.8 260.4L506.8 261.7L507.1 263.0L507.9 263.9L508.9 264.4L510.0 264.4L511.0 263.8L511.7 262.9M518.6 258.9L517.5 258.2L516.1 258.1L514.8 258.5L514.0 259.3L514.2 260.3L515.1 261.0L516.5 261.3L517.6 261.3L517.7 261.6L518.7 262.2L519.0 262.9L518.7 263.7L517.7 264.2L516.5 264.4L515.2 264.2L514.2 263.7M521.0 261.2L526.1 261.2L526.3 261.3L526.1 260.0L525.5 258.9L524.6 258.3L523.5 258.1L522.4 258.5L521.6 259.3L521.1 260.4L521.0 261.7L521.4 263.0L522.2 263.9L523.2 264.4L524.3 264.4L525.3 263.8L526.0 262.9M530.4 255.7L530.4 263.0L530.4 263.0L530.6 263.6L530.9 264.0L531.5 264.3L532.1 264.4L533.1 264.4M528.5 258.1L532.8 258.1" fill="none" stroke="#eeeecc" stroke-width="1.50" stroke-linecap="round" stroke-linejoin="round"/>
<path d="M377.6 331.0L378.2 330.0L379.0 329.2L380.1 328.9L381.3 328.9L382.4 329.2L383.2 330.0L383.8 331.0L384.0 332.1L384.0 332.1L383.9 332.9L383.7 333.6L383.2 334.2L377.2 340.6L384.2 340.6" fill="none" stroke="#ffffff" stroke-width="1.80" stroke-linecap="round" stroke-linejoin="round"/>
<path d="M370.8 351.5L369.8 350.4L368.6 349.8L367.3 350.0L366.1 350.8L365.2 352.1L364.7 353.9L364.5 355.9L364.8 357.8L365.5 359.5L366.5 360.7L367.7 361.3L368.9 361.3L370.1 360.6L371.1 359.3L371.7 357.6L371.9 355.6L371.9 356.2L368.9 356.2M377.3 361.4L377.3 349.8L384.3 361.4L384.3 349.8M389.9 349.8L389.9 361.4L392.8 361.4L392.8 361.4L393.9 361.2L394.9 360.6L395.7 359.7L396.4 358.5L396.8 357.1L396.9 355.6L396.8 354.1L396.4 352.7L395.7 351.5L394.9 350.6L393.9 350.0L392.8 349.8L389.9 349.8" fill="none" stroke="#ffffff" stroke-width="2.00" stroke-linecap="round" stroke-linejoin="round"/>
<path d="M513.5 331.0L514.1 330.0L514.9 329.2L516.0 328.9L517.2 328.9L518.3 329.2L519.1 330.0L519.7 331.0L519.9 332.1L519.9 332.1L519.8 332.9L519.6 333.6L519.1 334.2L513.1 340.6L520.1 340.6" fill="none" stroke="#ffffff" stroke-width="1.80" stroke-linecap="round" stroke-linejoin="round"/>
<path d="M506.7 351.5L505.7 350.4L504.5 349.8L503.2 350.0L502.0 350.8L501.1 352.1L500.6 353.9L500.4 355.9L500.7 357.8L501.4 359.5L502.4 360.7L503.6 361.3L504.8 361.3L506.0 360.6L507.0 359.3L507.6 357.6L507.8 355.6L507.8 356.2L504.8 356.2M513.2 361.4L513.2 349.8L520.2 361.4L520.2 349.8M525.8 349.8L525.8 361.4L528.7 361.4L528.7 361.4L529.8 361.2L530.8 360.6L531.6 359.7L532.3 358.5L532.7 357.1L532.8 355.6L532.7 354.1L532.3 352.7L531.6 351.5L530.8 350.6L529.8 350.0L528.7 349.8L525.8 349.8" fill="none" stroke="#ffffff" stroke-width="2.00" stroke-linecap="round" stroke-linejoin="round"/>
<path d="M585.3 245.0L587.7 243.0L587.7 252.8M585.3 252.8L590.1 252.8" fill="none" stroke="#ffffff" stroke-width="1.60" stroke-linecap="round" stroke-linejoin="round"/>
<path d="M638.1 244.8L638.6 244.0L639.3 243.4L640.2 243.0L641.2 243.0L642.1 243.4L642.8 244.0L643.3 244.8L643.4 245.7L643.4 245.7L643.4 246.4L643.2 247.0L642.8 247.5L637.8 252.8L643.6 252.8" fill="none" stroke="#ffffff" stroke-width="1.60" stroke-linecap="round" stroke-linejoin="round"/>
<path d="M585.2 296.2L590.4 296.2L587.4 300.1L587.6 300.1L588.7 300.3L589.6 300.9L590.2 301.7L590.5 302.7L590.5 303.8L590.0 304.7L589.3 305.5L588.3 305.9L587.2 306.0L586.2 305.6L585.4 305.0L584.9 304.1" fill="none" stroke="#ffffff" stroke-width="1.60" stroke-linecap="round" stroke-linejoin="round"/>
<path d="M642.3 306.0L642.3 296.2L637.2 302.9L644.2 302.9" fill="none" stroke="#ffffff" stroke-width="1.60" stroke-linecap="round" stroke-linejoin="round"/>
<path d="M590.1 349.4L585.3 349.4L584.9 353.8L585.7 353.7L586.8 353.1L588.0 352.9L589.1 353.3L590.0 354.2L590.5 355.3L590.5 356.6L590.1 357.8L589.2 358.7L588.1 359.2L586.9 359.1L585.9 358.6L585.1 357.6" fill="none" stroke="#ffffff" stroke-width="1.60" stroke-linecap="round" stroke-linejoin="round"/>
<path d="M643.6 356.1L643.4 357.3L642.8 358.3L641.8 359.0L640.7 359.2L639.6 359.0L638.6 358.3L638.0 357.3L637.8 356.1L638.0 354.9L638.6 353.8L639.6 353.2L640.7 352.9L641.8 353.2L642.8 353.8L643.4 354.9L643.6 356.1M637.8 356.1L637.8 355.5L637.9 355.0L642.2 349.4" fill="none" stroke="#ffffff" stroke-width="1.60" stroke-linecap="round" stroke-linejoin="round"/>
<path d="M577.8 264.0L577.2 263.3L576.4 262.9L575.4 262.8L574.6 263.2L574.0 264.0L573.9 264.8L574.2 265.6L574.9 266.2L575.9 266.4L576.7 266.8L577.0 266.6L577.6 267.1L578.0 267.7L578.0 268.4L577.8 269.0L577.3 269.6L576.5 269.9L575.7 270.0L574.9 269.8L574.3 269.4L573.9 268.8M579.4 262.8L580.6 270.0L581.8 265.8L582.9 270.0L584.2 262.8M585.5 262.8L585.5 270.0L587.3 270.0L587.3 270.0L587.9 269.9L588.5 269.5L589.1 268.9L589.5 268.2L589.7 267.3L589.8 266.4L589.7 265.5L589.5 264.6L589.1 263.9L588.5 263.3L587.9 262.9L587.3 262.8L585.5 262.8M593.5 262.8L593.5 270.0M601.6 266.4L601.4 267.5L601.1 268.5L600.6 269.3L600.0 269.8L599.3 270.0L598.6 269.8L598.0 269.3L597.5 268.5L597.2 267.5L597.1 266.4L597.2 265.3L597.5 264.3L598.0 263.5L598.6 263.0L599.3 262.8L600.0 263.0L600.6 263.5L601.1 264.3L601.4 265.3L601.6 266.4" fill="none" stroke="#eeeecc" stroke-width="1.30" stroke-linecap="round" stroke-linejoin="round"/>
<path d="M626.9 266.8L630.5 266.8M628.6 265.0L628.6 268.6M634.7 262.8L638.5 262.8L636.4 265.7L636.5 265.7L637.3 265.8L638.0 266.2L638.4 266.8L638.7 267.6L638.6 268.4L638.3 269.1L637.7 269.6L637.0 269.9L636.2 270.0L635.5 269.7L634.9 269.3L634.5 268.6M642.4 262.8L644.5 270.0L646.7 262.8M650.6 262.8L654.4 262.8L652.3 265.7L652.4 265.7L653.2 265.8L653.8 266.2L654.3 266.8L654.5 267.6L654.5 268.4L654.2 269.1L653.6 269.6L652.9 269.9L652.1 270.0L651.4 269.7L650.8 269.3L650.4 268.6" fill="none" stroke="#eeeecc" stroke-width="1.30" stroke-linecap="round" stroke-linejoin="round"/>
<path d="M577.8 317.2L577.2 316.5L576.4 316.1L575.4 316.0L574.6 316.4L574.0 317.2L573.9 318.0L574.2 318.8L574.9 319.4L575.9 319.6L576.7 320.0L577.0 319.8L577.6 320.3L578.0 320.9L578.0 321.6L577.8 322.2L577.3 322.8L576.5 323.1L575.7 323.2L574.9 323.0L574.3 322.6L573.9 322.0M579.4 316.0L580.6 323.2L581.8 319.0L583.0 323.2L584.2 316.0M589.8 317.3L589.3 316.6L588.6 316.1L587.8 316.0L587.1 316.2L586.5 316.7L585.9 317.5L585.6 318.5L585.5 319.6L585.6 320.7L585.9 321.7L586.5 322.5L587.1 323.0L587.8 323.2L588.6 323.1L589.3 322.6L589.8 321.9M591.4 316.0L591.4 323.2L595.6 323.2M597.2 316.0L597.2 323.2M601.6 316.0L597.2 320.5M598.8 319.0L601.6 323.2" fill="none" stroke="#eeeecc" stroke-width="1.30" stroke-linecap="round" stroke-linejoin="round"/>
<path d="M573.9 371.5L573.9 376.6M573.9 373.6L573.9 373.7L574.0 373.0L574.4 372.4L575.0 371.9L575.7 371.6L576.5 371.5L577.3 371.5M579.5 374.0L583.6 374.0L583.8 374.1L583.6 373.0L583.1 372.2L582.3 371.6L581.5 371.5L580.6 371.8L579.9 372.5L579.5 373.4L579.5 374.5L579.8 375.4L580.4 376.2L581.2 376.6L582.1 376.6L582.9 376.1L583.5 375.4M589.3 372.1L588.4 371.6L587.3 371.5L586.2 371.8L585.6 372.5L585.7 373.3L586.5 373.9L587.6 374.1L588.5 374.1L588.6 374.4L589.4 374.8L589.7 375.4L589.4 376.0L588.6 376.5L587.6 376.6L586.5 376.5L585.8 376.0M591.5 374.0L595.7 374.0L595.8 374.1L595.6 373.0L595.1 372.2L594.4 371.6L593.5 371.5L592.7 371.8L592.0 372.5L591.6 373.4L591.5 374.5L591.8 375.4L592.5 376.2L593.3 376.6L594.2 376.6L595.0 376.1L595.5 375.4M599.4 369.6L599.4 375.5L599.4 375.5L599.5 375.9L599.8 376.3L600.2 376.6L600.8 376.6L601.6 376.6M597.9 371.5L601.3 371.5" fill="none" stroke="#eeeecc" stroke-width="1.30" stroke-linecap="round" stroke-linejoin="round"/>
<path d="M633.4 369.6L632.5 368.5L631.4 368.0L630.2 368.2L629.2 368.9L628.3 370.1L627.8 371.8L627.6 373.6L627.9 375.3L628.5 376.9L629.4 378.0L630.5 378.5L631.7 378.5L632.8 377.8L633.7 376.7L634.2 375.1L634.4 373.3L634.4 373.8L631.7 373.8M637.6 378.6L637.6 368.0L644.0 378.6L644.0 368.0M647.4 368.0L647.4 378.6L650.0 378.6L650.0 378.6L651.0 378.4L651.9 377.9L652.7 377.0L653.3 375.9L653.6 374.7L653.8 373.3L653.6 371.9L653.3 370.6L652.7 369.6L651.9 368.7L651.0 368.2L650.0 368.0L647.4 368.0" fill="none" stroke="#ffffff" stroke-width="1.90" stroke-linecap="round" stroke-linejoin="round"/>
<path d="M239.6 500.0L241.0 498.8L241.0 504.6M239.6 504.6L242.4 504.6" transform="rotate(-90 241.0 501.7)" fill="none" stroke="#ffffff" stroke-width="1.20" stroke-linecap="round" stroke-linejoin="round"/>
<path d="M239.6 502.0L242.5 502.0M241.1 500.5L241.1 503.4M245.2 501.6L247.4 501.6L247.4 501.6L247.9 501.7L248.3 502.0L248.6 502.5L248.7 503.1L248.6 503.7L248.3 504.2L247.9 504.5L247.4 504.6L245.2 504.6L245.2 498.8L247.2 498.8L247.2 498.8L247.7 498.9L248.0 499.2L248.3 499.7L248.4 500.2L248.3 500.7L248.0 501.2L247.7 501.5L247.2 501.6M250.8 504.6L252.8 498.8L254.9 504.6M251.5 502.7L254.2 502.7M256.9 498.8L260.5 498.8M258.7 498.8L258.7 504.6M262.8 498.8L266.4 498.8M264.6 498.8L264.6 504.6" transform="rotate(-90 253.0 501.7)" fill="none" stroke="#eeeecc" stroke-width="1.20" stroke-linecap="round" stroke-linejoin="round"/>
<path d="M281.5 499.9L281.8 499.4L282.2 499.0L282.7 498.8L283.3 498.8L283.8 499.0L284.2 499.4L284.5 499.9L284.6 500.4L284.6 500.4L284.6 500.8L284.5 501.2L284.2 501.5L281.3 504.6L284.7 504.6" transform="rotate(-90 283.0 501.7)" fill="none" stroke="#ffffff" stroke-width="1.20" stroke-linecap="round" stroke-linejoin="round"/>
<path d="M288.8 499.6L288.2 499.1L287.6 498.8L287.0 498.9L286.4 499.3L286.0 500.0L285.7 500.9L285.6 501.8L285.7 502.8L286.1 503.6L286.6 504.3L287.2 504.6L287.8 504.5L288.4 504.2L288.9 503.5L289.2 502.7L289.3 501.7L289.3 502.0L287.8 502.0M293.3 504.6L293.3 498.8L296.8 504.6L296.8 498.8M300.9 498.8L300.9 504.6L302.4 504.6L302.4 504.6L302.9 504.5L303.4 504.2L303.8 503.8L304.1 503.2L304.3 502.5L304.4 501.7L304.3 500.9L304.1 500.2L303.8 499.6L303.4 499.2L302.9 498.9L302.4 498.8L300.9 498.8" transform="rotate(-90 295.0 501.7)" fill="none" stroke="#eeeecc" stroke-width="1.20" stroke-linecap="round" stroke-linejoin="round"/>
<path d="M691.6 239.0L693.1 237.8L693.1 244.0M691.6 244.0L694.6 244.0" transform="rotate(-90 693.1 240.9)" fill="none" stroke="#ffffff" stroke-width="1.30" stroke-linecap="round" stroke-linejoin="round"/>
<path d="M694.7 240.4L694.7 242.4M694.7 241.1L694.5 240.7L694.2 240.5L693.9 240.4L693.6 240.4L693.3 240.7L693.1 241.0L693.1 241.4L693.1 241.8L693.3 242.2L693.6 242.4L693.9 242.4L694.2 242.4L694.5 242.1L694.7 241.8M698.2 240.4L698.2 242.4M698.2 241.1L698.0 240.7L697.7 240.5L697.4 240.4L697.1 240.4L696.8 240.7L696.6 241.0L696.5 241.4L696.6 241.8L696.8 242.2L697.1 242.4L697.4 242.4L697.7 242.4L698.0 242.1L698.2 241.8M701.7 240.4L701.7 242.4M701.7 241.1L701.5 240.7L701.2 240.5L700.9 240.4L700.6 240.4L700.3 240.7L700.1 241.0L700.0 241.4L700.1 241.8L700.3 242.2L700.6 242.4L700.9 242.4L701.2 242.4L701.5 242.1L701.7 241.8M705.1 240.4L705.1 242.4M705.2 241.1L705.0 240.7L704.7 240.5L704.4 240.4L704.1 240.4L703.8 240.7L703.6 241.0L703.5 241.4L703.6 241.8L703.8 242.2L704.1 242.4L704.4 242.4L704.7 242.4L705.0 242.1L705.2 241.8M708.6 240.4L708.6 242.4M708.7 241.1L708.5 240.7L708.2 240.5L707.9 240.4L707.6 240.4L707.3 240.7L707.1 241.0L707.0 241.4L707.1 241.8L707.3 242.2L707.6 242.4L707.9 242.4L708.2 242.4L708.5 242.1L708.7 241.8M712.1 240.4L712.1 242.4M712.2 241.1L712.0 240.7L711.7 240.5L711.4 240.4L711.1 240.4L710.8 240.7L710.6 241.0L710.5 241.4L710.6 241.8L710.8 242.2L711.1 242.4L711.4 242.4L711.7 242.4L712.0 242.1L712.2 241.8" transform="rotate(-90 702.6 240.9)" fill="none" stroke="#eeeecc" stroke-width="0.90" stroke-linecap="round" stroke-linejoin="round"/>
<path d="M734.9 238.9L735.2 238.4L735.6 238.0L736.2 237.8L736.8 237.8L737.4 238.0L737.8 238.4L738.1 238.9L738.2 239.5L738.2 239.5L738.2 239.9L738.1 240.3L737.8 240.7L734.6 244.0L738.4 244.0" transform="rotate(-90 736.5 240.9)" fill="none" stroke="#ffffff" stroke-width="1.30" stroke-linecap="round" stroke-linejoin="round"/>
<path d="M738.2 238.2L738.2 243.6L741.3 243.6M747.5 238.2L744.4 238.2L744.4 243.6L747.5 243.6M744.4 240.8L746.5 240.8M750.6 238.2L750.6 243.6L751.9 243.6L751.9 243.6L752.4 243.5L752.9 243.2L753.3 242.8L753.6 242.2L753.7 241.6L753.8 240.9L753.7 240.2L753.6 239.6L753.3 239.0L752.9 238.6L752.4 238.3L751.9 238.2L750.6 238.2" transform="rotate(-90 746.0 240.9)" fill="none" stroke="#eeeecc" stroke-width="1.20" stroke-linecap="round" stroke-linejoin="round"/>
<path d="M770.5 237.8L772.0 236.6L772.0 242.8M770.5 242.8L773.5 242.8" transform="rotate(-90 772.0 239.7)" fill="none" stroke="#ffffff" stroke-width="1.30" stroke-linecap="round" stroke-linejoin="round"/>
<path d="M771.1 240.0L773.7 240.0M772.4 238.6L772.4 241.3M777.0 237.0L779.8 237.0L778.3 239.2L778.4 239.2L778.9 239.3L779.4 239.6L779.8 240.0L779.9 240.6L779.9 241.1L779.7 241.7L779.3 242.1L778.7 242.3L778.2 242.3L777.6 242.2L777.2 241.8L776.9 241.3M782.8 237.0L784.4 242.3L786.0 237.0M789.0 237.0L791.8 237.0L790.2 239.2L790.3 239.2L790.9 239.3L791.4 239.6L791.7 240.0L791.9 240.6L791.9 241.1L791.6 241.7L791.2 242.1L790.7 242.3L790.1 242.3L789.6 242.2L789.1 241.8L788.8 241.3" transform="rotate(-90 781.5 239.7)" fill="none" stroke="#eeeecc" stroke-width="1.20" stroke-linecap="round" stroke-linejoin="round"/>
<path d="M813.4 237.7L813.7 237.2L814.1 236.8L814.7 236.6L815.3 236.6L815.9 236.8L816.3 237.2L816.6 237.7L816.7 238.3L816.7 238.3L816.7 238.7L816.6 239.1L816.3 239.5L813.1 242.8L816.9 242.8" transform="rotate(-90 815.0 239.7)" fill="none" stroke="#ffffff" stroke-width="1.30" stroke-linecap="round" stroke-linejoin="round"/>
<path d="M819.6 237.8L819.1 237.3L818.6 237.1L818.0 237.1L817.5 237.5L817.0 238.1L816.8 238.9L816.7 239.8L816.8 240.7L817.1 241.5L817.6 242.0L818.1 242.3L818.7 242.3L819.3 242.0L819.7 241.4L820.0 240.6L820.1 239.7L820.1 240.0L818.7 240.0M823.0 242.3L823.0 237.0L826.1 242.3L826.1 237.0M829.1 237.0L829.1 242.3L830.4 242.3L830.4 242.3L830.9 242.3L831.4 242.0L831.8 241.6L832.1 241.0L832.2 240.4L832.3 239.7L832.2 239.0L832.1 238.4L831.8 237.8L831.4 237.4L830.9 237.1L830.4 237.0L829.1 237.0" transform="rotate(-90 824.5 239.7)" fill="none" stroke="#eeeecc" stroke-width="1.20" stroke-linecap="round" stroke-linejoin="round"/>
<path d="M691.1 281.0L692.6 279.8L692.6 286.0M691.1 286.0L694.1 286.0" transform="rotate(-90 692.6 282.9)" fill="none" stroke="#ffffff" stroke-width="1.30" stroke-linecap="round" stroke-linejoin="round"/>
<path d="M691.7 283.2L694.3 283.2M693.0 281.8L693.0 284.5M695.9 282.8L697.9 282.8L697.9 282.8L698.4 282.9L698.7 283.2L699.0 283.6L699.1 284.2L699.0 284.7L698.7 285.1L698.4 285.4L697.9 285.6L695.9 285.6L695.9 280.2L697.7 280.2L697.7 280.2L698.2 280.3L698.5 280.6L698.7 281.0L698.8 281.5L698.7 282.0L698.5 282.4L698.2 282.7L697.7 282.8M700.1 285.6L701.9 280.2L703.8 285.6M700.7 283.8L703.2 283.8M704.8 280.2L708.0 280.2M706.4 280.2L706.4 285.6M709.2 280.2L712.5 280.2M710.9 280.2L710.9 285.6" transform="rotate(-90 702.1 282.9)" fill="none" stroke="#eeeecc" stroke-width="1.20" stroke-linecap="round" stroke-linejoin="round"/>
<path d="M733.7 280.9L734.0 280.4L734.4 280.0L735.0 279.8L735.6 279.8L736.2 280.0L736.6 280.4L736.9 280.9L737.0 281.5L737.0 281.5L737.0 281.9L736.9 282.3L736.6 282.7L733.4 286.0L737.2 286.0" transform="rotate(-90 735.3 282.9)" fill="none" stroke="#ffffff" stroke-width="1.30" stroke-linecap="round" stroke-linejoin="round"/>
<path d="M739.9 281.0L739.4 280.5L738.9 280.3L738.3 280.3L737.8 280.7L737.3 281.3L737.1 282.1L737.0 283.0L737.1 283.9L737.4 284.7L737.9 285.2L738.4 285.5L739.0 285.5L739.6 285.2L740.0 284.6L740.3 283.8L740.4 282.9L740.4 283.2L739.0 283.2M743.3 285.6L743.3 280.2L746.4 285.6L746.4 280.2M749.4 280.2L749.4 285.6L750.7 285.6L750.7 285.6L751.2 285.5L751.7 285.2L752.1 284.8L752.4 284.2L752.5 283.6L752.6 282.9L752.5 282.2L752.4 281.6L752.1 281.0L751.7 280.6L751.2 280.3L750.7 280.2L749.4 280.2" transform="rotate(-90 744.8 282.9)" fill="none" stroke="#eeeecc" stroke-width="1.20" stroke-linecap="round" stroke-linejoin="round"/>
<path d="M516.8 420.7L518.3 419.5L518.3 425.7M516.8 425.7L519.8 425.7" transform="rotate(-90 518.3 422.6)" fill="none" stroke="#ffffff" stroke-width="1.30" stroke-linecap="round" stroke-linejoin="round"/>
<path d="M517.4 422.9L520.0 422.9M518.7 421.5L518.7 424.2M523.3 420.0L526.1 420.0L524.6 422.1L524.7 422.1L525.2 422.2L525.7 422.5L526.1 422.9L526.2 423.5L526.2 424.0L526.0 424.6L525.6 425.0L525.0 425.2L524.5 425.2L523.9 425.1L523.5 424.7L523.2 424.2M529.1 420.0L530.7 425.3L532.3 420.0M535.3 420.0L538.1 420.0L536.5 422.1L536.6 422.1L537.2 422.2L537.7 422.5L538.0 422.9L538.2 423.5L538.2 424.0L537.9 424.6L537.5 425.0L537.0 425.2L536.4 425.2L535.9 425.1L535.4 424.7L535.1 424.2" transform="rotate(-90 527.8 422.6)" fill="none" stroke="#eeeecc" stroke-width="1.20" stroke-linecap="round" stroke-linejoin="round"/>
<path d="M559.6 420.6L559.9 420.1L560.3 419.7L560.9 419.5L561.5 419.5L562.1 419.7L562.5 420.1L562.8 420.6L562.9 421.2L562.9 421.2L562.9 421.6L562.8 422.0L562.5 422.4L559.3 425.7L563.1 425.7" transform="rotate(-90 561.2 422.6)" fill="none" stroke="#ffffff" stroke-width="1.30" stroke-linecap="round" stroke-linejoin="round"/>
<path d="M565.8 420.7L565.3 420.2L564.8 420.0L564.2 420.0L563.7 420.4L563.2 421.0L563.0 421.8L562.9 422.7L563.0 423.6L563.3 424.4L563.8 424.9L564.3 425.2L564.9 425.2L565.5 424.9L565.9 424.3L566.2 423.5L566.3 422.6L566.3 422.9L564.9 422.9M569.2 425.3L569.2 420.0L572.3 425.3L572.3 420.0M575.3 420.0L575.3 425.3L576.6 425.3L576.6 425.3L577.1 425.2L577.6 424.9L578.0 424.5L578.3 423.9L578.4 423.3L578.5 422.6L578.4 421.9L578.3 421.3L578.0 420.7L577.6 420.3L577.1 420.0L576.6 420.0L575.3 420.0" transform="rotate(-90 570.7 422.6)" fill="none" stroke="#eeeecc" stroke-width="1.20" stroke-linecap="round" stroke-linejoin="round"/>
<path d="M595.5 420.7L597.0 419.5L597.0 425.7M595.5 425.7L598.5 425.7" transform="rotate(-90 597.0 422.6)" fill="none" stroke="#ffffff" stroke-width="1.30" stroke-linecap="round" stroke-linejoin="round"/>
<path d="M601.6 420.7L601.1 420.2L600.6 420.0L600.0 420.0L599.5 420.4L599.0 421.0L598.8 421.8L598.7 422.7L598.8 423.6L599.1 424.4L599.6 424.9L600.1 425.2L600.7 425.2L601.3 424.9L601.7 424.3L602.0 423.5L602.1 422.6L602.1 422.9L600.7 422.9M605.0 425.3L605.0 420.0L608.1 425.3L608.1 420.0M611.1 420.0L611.1 425.3L612.4 425.3L612.4 425.3L612.9 425.2L613.4 424.9L613.8 424.5L614.1 423.9L614.2 423.3L614.3 422.6L614.2 421.9L614.1 421.3L613.8 420.7L613.4 420.3L612.9 420.0L612.4 420.0L611.1 420.0" transform="rotate(-90 606.5 422.6)" fill="none" stroke="#eeeecc" stroke-width="1.20" stroke-linecap="round" stroke-linejoin="round"/>
<path d="M637.7 420.6L638.0 420.1L638.4 419.7L639.0 419.5L639.6 419.5L640.2 419.7L640.6 420.1L640.9 420.6L641.0 421.2L641.0 421.2L641.0 421.6L640.9 422.0L640.6 422.4L637.4 425.7L641.2 425.7" transform="rotate(-90 639.3 422.6)" fill="none" stroke="#ffffff" stroke-width="1.30" stroke-linecap="round" stroke-linejoin="round"/>
<path d="M640.9 422.1L640.9 424.2M640.9 422.8L640.7 422.4L640.4 422.2L640.1 422.1L639.8 422.1L639.5 422.4L639.3 422.7L639.2 423.1L639.3 423.5L639.5 423.9L639.8 424.1L640.1 424.1L640.4 424.1L640.7 423.8L640.9 423.5M644.4 422.1L644.4 424.2M644.4 422.8L644.2 422.4L643.9 422.2L643.6 422.1L643.3 422.1L643.0 422.4L642.8 422.7L642.7 423.1L642.8 423.5L643.0 423.9L643.3 424.1L643.6 424.1L643.9 424.1L644.2 423.8L644.4 423.5M647.9 422.1L647.9 424.2M647.9 422.8L647.7 422.4L647.4 422.2L647.1 422.1L646.8 422.1L646.5 422.4L646.3 422.7L646.2 423.1L646.3 423.5L646.5 423.9L646.8 424.1L647.1 424.1L647.4 424.1L647.7 423.8L647.9 423.5M651.3 422.1L651.3 424.2M651.4 422.8L651.2 422.4L650.9 422.2L650.6 422.1L650.3 422.1L650.0 422.4L649.8 422.7L649.7 423.1L649.8 423.5L650.0 423.9L650.3 424.1L650.6 424.1L650.9 424.1L651.2 423.8L651.4 423.5M654.8 422.1L654.8 424.2M654.9 422.8L654.7 422.4L654.4 422.2L654.1 422.1L653.8 422.1L653.5 422.4L653.3 422.7L653.2 423.1L653.3 423.5L653.5 423.9L653.8 424.1L654.1 424.1L654.4 424.1L654.7 423.8L654.9 423.5M658.3 422.1L658.3 424.2M658.4 422.8L658.2 422.4L657.9 422.2L657.6 422.1L657.3 422.1L657.0 422.4L656.8 422.7L656.7 423.1L656.8 423.5L657.0 423.9L657.3 424.1L657.6 424.1L657.9 424.1L658.2 423.8L658.4 423.5" transform="rotate(-90 648.8 422.6)" fill="none" stroke="#eeeecc" stroke-width="0.90" stroke-linecap="round" stroke-linejoin="round"/>
<path d="M516.8 460.5L518.3 459.3L518.3 465.5M516.8 465.5L519.8 465.5" transform="rotate(-90 518.3 462.4)" fill="none" stroke="#ffffff" stroke-width="1.30" stroke-linecap="round" stroke-linejoin="round"/>
<path d="M517.4 462.7L520.0 462.7M518.7 461.3L518.7 464.0M523.3 459.8L526.1 459.8L524.6 461.9L524.7 461.9L525.2 462.0L525.7 462.3L526.1 462.7L526.2 463.3L526.2 463.8L526.0 464.4L525.6 464.8L525.0 465.0L524.5 465.0L523.9 464.9L523.5 464.5L523.2 464.0M529.1 459.8L530.7 465.1L532.3 459.8M535.3 459.8L538.1 459.8L536.5 461.9L536.6 461.9L537.2 462.0L537.7 462.3L538.0 462.7L538.2 463.3L538.2 463.8L537.9 464.4L537.5 464.8L537.0 465.0L536.4 465.0L535.9 464.9L535.4 464.5L535.1 464.0" transform="rotate(-90 527.8 462.4)" fill="none" stroke="#eeeecc" stroke-width="1.20" stroke-linecap="round" stroke-linejoin="round"/>
<path d="M559.6 460.4L559.9 459.9L560.3 459.5L560.9 459.3L561.5 459.3L562.1 459.5L562.5 459.9L562.8 460.4L562.9 461.0L562.9 461.0L562.9 461.4L562.8 461.8L562.5 462.2L559.3 465.5L563.1 465.5" transform="rotate(-90 561.2 462.4)" fill="none" stroke="#ffffff" stroke-width="1.30" stroke-linecap="round" stroke-linejoin="round"/>
<path d="M560.3 461.5L560.3 465.1M560.3 462.9L560.3 463.0L560.4 462.6L560.7 462.1L561.1 461.8L561.6 461.6L562.2 461.5L562.7 461.5M564.6 463.2L567.5 463.2L567.6 463.3L567.4 462.6L567.1 462.0L566.6 461.6L566.0 461.5L565.4 461.7L564.9 462.2L564.6 462.8L564.6 463.5L564.8 464.2L565.2 464.7L565.8 465.0L566.4 465.0L567.0 464.7L567.4 464.2M571.8 461.9L571.2 461.6L570.4 461.5L569.7 461.7L569.3 462.2L569.3 462.7L569.8 463.1L570.6 463.3L571.3 463.3L571.3 463.5L571.9 463.8L572.0 464.2L571.9 464.6L571.3 464.9L570.6 465.1L569.9 464.9L569.4 464.6M573.8 463.2L576.6 463.2L576.7 463.3L576.6 462.6L576.3 462.0L575.7 461.6L575.1 461.5L574.6 461.7L574.1 462.2L573.8 462.8L573.8 463.5L574.0 464.2L574.4 464.7L575.0 465.0L575.6 465.0L576.1 464.7L576.5 464.2M579.6 460.2L579.6 464.3L579.6 464.3L579.7 464.6L579.9 464.8L580.2 465.0L580.6 465.1L581.1 465.1M578.6 461.5L580.9 461.5" transform="rotate(-90 570.7 462.4)" fill="none" stroke="#eeeecc" stroke-width="1.20" stroke-linecap="round" stroke-linejoin="round"/>
<path d="M369.3 392.5L370.0 391.9L370.0 394.7M369.3 394.7L370.7 394.7" fill="none" stroke="#e0c8c8" stroke-width="0.80" stroke-linecap="round" stroke-linejoin="round"/>
<path d="M362.5 398.0L362.1 397.6L361.7 397.5L361.3 397.5L361.0 397.8L360.7 398.2L360.5 398.8L360.4 399.4L360.5 400.0L360.8 400.5L361.1 400.9L361.5 401.1L361.9 401.1L362.2 400.9L362.5 400.5L362.7 399.9L362.8 399.3L362.8 399.5L361.9 399.5M363.9 401.1L363.9 397.4L365.2 397.4L365.2 397.4L365.6 397.5L365.8 397.7L366.0 398.0L366.1 398.4L366.0 398.7L365.8 399.0L365.6 399.2L365.2 399.3L363.9 399.3M368.4 397.4L368.4 401.1M372.9 399.3L372.8 399.9L372.6 400.4L372.4 400.8L372.1 401.1L371.7 401.1L371.4 401.1L371.0 400.8L370.8 400.4L370.6 399.9L370.6 399.3L370.6 398.7L370.8 398.2L371.0 397.8L371.4 397.5L371.7 397.4L372.1 397.5L372.4 397.8L372.6 398.2L372.8 398.7L372.9 399.3M373.9 401.6L376.2 401.6M379.4 398.4L379.3 398.8L379.0 399.1L378.6 399.3L378.2 399.3L377.9 399.1L377.6 398.8L377.5 398.4L377.6 398.0L377.9 397.7L378.2 397.5L378.6 397.5L379.0 397.7L379.3 398.0L379.4 398.4M379.6 400.2L379.5 400.6L379.2 400.9L378.9 401.1L378.4 401.1L378.0 401.1L377.7 400.9L377.4 400.6L377.3 400.2L377.4 399.8L377.7 399.5L378.0 399.3L378.4 399.2L378.9 399.3L379.2 399.5L379.5 399.8L379.6 400.2" fill="none" stroke="#e0c8c8" stroke-width="0.90" stroke-linecap="round" stroke-linejoin="round"/>
<path d="M481.2 392.5L481.9 391.9L481.9 394.7M481.2 394.7L482.6 394.7M485.2 394.7L485.2 391.9L483.7 393.8L485.8 393.8" fill="none" stroke="#e0c8c8" stroke-width="0.80" stroke-linecap="round" stroke-linejoin="round"/>
<path d="M476.0 398.0L475.6 397.6L475.2 397.5L474.8 397.5L474.5 397.8L474.2 398.2L474.0 398.8L473.9 399.4L474.0 400.0L474.3 400.5L474.6 400.9L475.0 401.1L475.4 401.1L475.7 400.9L476.0 400.5L476.2 399.9L476.3 399.3L476.3 399.5L475.4 399.5M477.4 401.1L477.4 397.4L478.7 397.4L478.7 397.4L479.1 397.5L479.4 397.7L479.5 398.0L479.6 398.4L479.5 398.7L479.4 399.0L479.1 399.2L478.7 399.3L477.4 399.3M481.9 397.4L481.9 401.1M486.4 399.3L486.3 399.9L486.2 400.4L485.9 400.8L485.6 401.1L485.2 401.1L484.9 401.1L484.6 400.8L484.3 400.4L484.2 399.9L484.1 399.3L484.2 398.7L484.3 398.2L484.6 397.8L484.9 397.5L485.2 397.4L485.6 397.5L485.9 397.8L486.2 398.2L486.3 398.7L486.4 399.3M487.5 401.6L489.8 401.6M492.9 397.4L491.1 397.4L490.9 399.1L491.2 399.1L491.6 398.8L492.1 398.8L492.5 398.9L492.8 399.3L493.0 399.7L493.1 400.2L492.9 400.6L492.6 401.0L492.1 401.1L491.7 401.1L491.3 400.9L491.0 400.6" fill="none" stroke="#e0c8c8" stroke-width="0.90" stroke-linecap="round" stroke-linejoin="round"/>
<path d="M369.3 419.0L369.4 418.8L369.6 418.6L369.9 418.5L370.1 418.5L370.4 418.6L370.6 418.8L370.7 419.0L370.8 419.3L370.8 419.3L370.8 419.5L370.7 419.7L370.6 419.8L369.2 421.3L370.8 421.3" fill="none" stroke="#e0c8c8" stroke-width="0.80" stroke-linecap="round" stroke-linejoin="round"/>
<path d="M362.5 424.6L362.1 424.3L361.7 424.1L361.3 424.1L361.0 424.4L360.7 424.8L360.5 425.4L360.4 426.0L360.5 426.6L360.8 427.2L361.1 427.6L361.5 427.8L361.9 427.7L362.2 427.5L362.5 427.1L362.7 426.6L362.8 425.9L362.8 426.1L361.9 426.1M363.9 427.8L363.9 424.1L365.2 424.1L365.2 424.1L365.6 424.2L365.9 424.4L366.0 424.7L366.1 425.0L366.0 425.4L365.9 425.7L365.6 425.9L365.2 425.9L363.9 425.9M368.4 424.1L368.4 427.8M372.9 425.9L372.8 426.5L372.7 427.0L372.4 427.4L372.1 427.7L371.7 427.8L371.4 427.7L371.1 427.4L370.8 427.0L370.6 426.5L370.6 425.9L370.6 425.4L370.8 424.8L371.1 424.4L371.4 424.2L371.7 424.1L372.1 424.2L372.4 424.4L372.7 424.8L372.8 425.4L372.9 425.9M374.0 428.2L376.3 428.2M377.5 424.1L379.5 424.1L378.4 425.6L378.4 425.6L378.8 425.6L379.2 425.8L379.4 426.2L379.5 426.5L379.5 426.9L379.4 427.3L379.1 427.6L378.7 427.8L378.3 427.8L377.9 427.6L377.6 427.4L377.4 427.0" fill="none" stroke="#e0c8c8" stroke-width="0.90" stroke-linecap="round" stroke-linejoin="round"/>
<path d="M481.2 419.1L481.9 418.5L481.9 421.3M481.2 421.3L482.6 421.3M484.2 418.5L485.7 418.5L484.9 419.6L484.9 419.6L485.2 419.7L485.5 419.9L485.7 420.1L485.8 420.4L485.7 420.7L485.6 421.0L485.4 421.2L485.1 421.3L484.8 421.3L484.5 421.2L484.3 421.0L484.1 420.8" fill="none" stroke="#e0c8c8" stroke-width="0.80" stroke-linecap="round" stroke-linejoin="round"/>
<path d="M480.0 424.6L479.6 424.3L479.2 424.1L478.8 424.1L478.5 424.4L478.2 424.8L478.0 425.4L477.9 426.0L478.0 426.6L478.3 427.2L478.6 427.6L479.0 427.8L479.4 427.7L479.7 427.5L480.0 427.1L480.2 426.6L480.3 425.9L480.3 426.1L479.4 426.1M482.4 427.8L482.4 424.1L484.6 427.8L484.6 424.1M486.8 424.1L486.8 427.8L487.8 427.8L487.8 427.8L488.1 427.7L488.4 427.5L488.7 427.2L488.9 426.9L489.0 426.4L489.0 425.9L489.0 425.5L488.9 425.0L488.7 424.6L488.4 424.3L488.1 424.1L487.8 424.1L486.8 424.1" fill="none" stroke="#e0c8c8" stroke-width="0.90" stroke-linecap="round" stroke-linejoin="round"/>
<path d="M369.3 445.2L370.8 445.2L369.9 446.3L370.0 446.3L370.3 446.3L370.5 446.5L370.7 446.7L370.8 447.0L370.8 447.3L370.7 447.6L370.4 447.8L370.2 447.9L369.9 448.0L369.6 447.9L369.3 447.7L369.2 447.4" fill="none" stroke="#e0c8c8" stroke-width="0.80" stroke-linecap="round" stroke-linejoin="round"/>
<path d="M362.5 451.3L362.1 450.9L361.7 450.7L361.3 450.8L361.0 451.0L360.7 451.5L360.5 452.0L360.4 452.7L360.5 453.3L360.8 453.8L361.1 454.2L361.5 454.4L361.9 454.4L362.2 454.1L362.5 453.7L362.7 453.2L362.8 452.6L362.8 452.7L361.9 452.7M363.9 454.4L363.9 450.7L365.2 450.7L365.2 450.7L365.6 450.8L365.8 451.0L366.0 451.3L366.1 451.6L366.0 452.0L365.8 452.3L365.6 452.5L365.2 452.6L363.9 452.6M368.4 450.7L368.4 454.4M372.9 452.6L372.8 453.1L372.6 453.6L372.4 454.1L372.1 454.3L371.7 454.4L371.4 454.3L371.0 454.1L370.8 453.6L370.6 453.1L370.6 452.6L370.6 452.0L370.8 451.5L371.0 451.1L371.4 450.8L371.7 450.7L372.1 450.8L372.4 451.1L372.6 451.5L372.8 452.0L372.9 452.6M373.9 454.9L376.2 454.9M377.5 451.4L377.6 451.1L377.9 450.8L378.3 450.7L378.6 450.7L379.0 450.8L379.2 451.1L379.4 451.4L379.5 451.7L379.5 451.7L379.4 452.0L379.4 452.2L379.2 452.4L377.3 454.4L379.6 454.4" fill="none" stroke="#e0c8c8" stroke-width="0.90" stroke-linecap="round" stroke-linejoin="round"/>
<path d="M481.2 445.7L481.9 445.2L481.9 448.0M481.2 448.0L482.6 448.0M484.2 445.7L484.3 445.4L484.5 445.3L484.8 445.2L485.1 445.2L485.3 445.3L485.5 445.4L485.7 445.7L485.7 445.9L485.7 445.9L485.7 446.1L485.6 446.3L485.5 446.4L484.1 448.0L485.8 448.0" fill="none" stroke="#e0c8c8" stroke-width="0.80" stroke-linecap="round" stroke-linejoin="round"/>
<path d="M475.9 452.7L477.8 452.7M476.9 451.8L476.9 453.7M480.3 450.7L482.2 450.7L481.1 452.2L481.2 452.2L481.6 452.3L482.0 452.5L482.2 452.8L482.3 453.2L482.3 453.6L482.1 453.9L481.8 454.2L481.5 454.4L481.1 454.4L480.7 454.3L480.4 454.0L480.2 453.7M484.5 450.7L485.6 454.4L486.7 450.7M489.0 450.7L491.0 450.7L489.9 452.2L489.9 452.2L490.3 452.3L490.7 452.5L490.9 452.8L491.0 453.2L491.0 453.6L490.9 453.9L490.6 454.2L490.2 454.4L489.8 454.4L489.4 454.3L489.1 454.0L488.9 453.7" fill="none" stroke="#e0c8c8" stroke-width="0.90" stroke-linecap="round" stroke-linejoin="round"/>
<path d="M370.4 474.6L370.4 471.8L369.0 473.7L371.0 473.7" fill="none" stroke="#e0c8c8" stroke-width="0.80" stroke-linecap="round" stroke-linejoin="round"/>
<path d="M362.5 477.9L362.1 477.5L361.7 477.3L361.3 477.4L361.0 477.7L360.7 478.1L360.5 478.7L360.4 479.3L360.5 479.9L360.8 480.4L361.1 480.8L361.5 481.0L361.9 481.0L362.2 480.8L362.5 480.4L362.7 479.8L362.8 479.2L362.8 479.4L361.9 479.4M363.9 481.0L363.9 477.3L365.3 477.3L365.3 477.3L365.6 477.4L365.9 477.6L366.1 477.9L366.1 478.3L366.1 478.6L365.9 478.9L365.6 479.1L365.3 479.2L363.9 479.2M368.4 477.3L368.4 481.0M373.0 479.2L372.9 479.8L372.8 480.3L372.5 480.7L372.2 480.9L371.9 481.0L371.5 480.9L371.2 480.7L370.9 480.3L370.8 479.8L370.7 479.2L370.8 478.6L370.9 478.1L371.2 477.7L371.5 477.4L371.9 477.3L372.2 477.4L372.5 477.7L372.8 478.1L372.9 478.6L373.0 479.2M374.1 481.5L376.4 481.5M377.8 478.1L378.7 477.3L378.7 481.0M377.8 481.0L379.6 481.0" fill="none" stroke="#e0c8c8" stroke-width="0.90" stroke-linecap="round" stroke-linejoin="round"/>
<path d="M481.2 472.3L481.9 471.8L481.9 474.6M481.2 474.6L482.6 474.6M484.4 472.3L485.1 471.8L485.1 474.6M484.4 474.6L485.8 474.6" fill="none" stroke="#e0c8c8" stroke-width="0.80" stroke-linecap="round" stroke-linejoin="round"/>
<path d="M480.0 477.9L479.6 477.5L479.2 477.3L478.8 477.4L478.5 477.7L478.2 478.1L478.0 478.7L477.9 479.3L478.0 479.9L478.3 480.4L478.6 480.8L479.0 481.0L479.4 481.0L479.7 480.8L480.0 480.4L480.2 479.8L480.3 479.2L480.3 479.4L479.4 479.4M482.4 481.0L482.4 477.3L484.6 481.0L484.6 477.3M486.8 477.3L486.8 481.0L487.8 481.0L487.8 481.0L488.1 481.0L488.4 480.8L488.7 480.5L488.9 480.1L489.0 479.7L489.0 479.2L489.0 478.7L488.9 478.3L488.7 477.9L488.4 477.6L488.1 477.4L487.8 477.3L486.8 477.3" fill="none" stroke="#e0c8c8" stroke-width="0.90" stroke-linecap="round" stroke-linejoin="round"/>
<path d="M370.7 498.4L369.3 498.4L369.2 499.7L369.4 499.6L369.7 499.5L370.1 499.4L370.4 499.5L370.7 499.8L370.8 500.1L370.8 500.5L370.7 500.8L370.4 501.1L370.1 501.2L369.8 501.2L369.5 501.0L369.3 500.8" fill="none" stroke="#e0c8c8" stroke-width="0.80" stroke-linecap="round" stroke-linejoin="round"/>
<path d="M362.5 504.5L362.1 504.1L361.7 504.0L361.3 504.0L361.0 504.3L360.7 504.7L360.5 505.3L360.4 505.9L360.5 506.5L360.8 507.1L361.1 507.5L361.5 507.6L361.9 507.6L362.2 507.4L362.5 507.0L362.7 506.4L362.8 505.8L362.8 506.0L361.9 506.0M363.9 507.7L363.9 504.0L365.2 504.0L365.2 504.0L365.6 504.0L365.9 504.2L366.0 504.5L366.1 504.9L366.0 505.2L365.9 505.5L365.6 505.7L365.2 505.8L363.9 505.8M368.4 504.0L368.4 507.7M372.9 505.8L372.8 506.4L372.7 506.9L372.4 507.3L372.1 507.6L371.7 507.7L371.4 507.6L371.1 507.3L370.8 506.9L370.7 506.4L370.6 505.8L370.7 505.2L370.8 504.7L371.1 504.3L371.4 504.1L371.7 504.0L372.1 504.1L372.4 504.3L372.7 504.7L372.8 505.2L372.9 505.8M374.0 508.1L376.3 508.1M379.4 504.0L377.6 504.0L377.4 505.6L377.7 505.6L378.1 505.4L378.6 505.3L379.0 505.5L379.3 505.8L379.5 506.2L379.5 506.7L379.4 507.1L379.1 507.5L378.6 507.7L378.2 507.6L377.8 507.4L377.5 507.1" fill="none" stroke="#e0c8c8" stroke-width="0.90" stroke-linecap="round" stroke-linejoin="round"/>
<path d="M481.2 499.0L481.9 498.4L481.9 501.2M481.2 501.2L482.6 501.2M485.8 499.8L485.7 500.3L485.6 500.6L485.4 501.0L485.2 501.2L484.9 501.2L484.7 501.2L484.4 501.0L484.2 500.6L484.1 500.3L484.1 499.8L484.1 499.4L484.2 499.0L484.4 498.7L484.7 498.5L484.9 498.4L485.2 498.5L485.4 498.7L485.6 499.0L485.7 499.4L485.8 499.8" fill="none" stroke="#e0c8c8" stroke-width="0.80" stroke-linecap="round" stroke-linejoin="round"/>
<path d="M476.0 504.5L475.6 504.1L475.2 504.0L474.8 504.0L474.5 504.3L474.2 504.7L474.0 505.3L473.9 505.9L474.0 506.5L474.3 507.1L474.6 507.5L475.0 507.6L475.4 507.6L475.7 507.4L476.0 507.0L476.2 506.4L476.3 505.8L476.3 506.0L475.4 506.0M477.4 507.7L477.4 504.0L478.7 504.0L478.7 504.0L479.1 504.0L479.3 504.2L479.5 504.5L479.6 504.9L479.5 505.2L479.3 505.5L479.1 505.7L478.7 505.8L477.4 505.8M481.9 504.0L481.9 507.7M486.4 505.8L486.3 506.4L486.1 506.9L485.9 507.3L485.6 507.6L485.2 507.7L484.9 507.6L484.5 507.3L484.3 506.9L484.1 506.4L484.1 505.8L484.1 505.2L484.3 504.7L484.5 504.3L484.9 504.1L485.2 504.0L485.6 504.1L485.9 504.3L486.1 504.7L486.3 505.2L486.4 505.8M487.4 508.1L489.7 508.1M492.9 504.9L492.8 505.3L492.5 505.6L492.1 505.8L491.7 505.8L491.4 505.6L491.1 505.3L491.0 504.9L491.1 504.5L491.4 504.2L491.7 504.0L492.1 504.0L492.5 504.2L492.8 504.5L492.9 504.9M493.0 506.7L493.0 507.1L492.7 507.4L492.4 507.6L491.9 507.7L491.5 507.6L491.2 507.4L490.9 507.1L490.8 506.7L490.9 506.3L491.2 506.0L491.5 505.8L491.9 505.7L492.4 505.8L492.7 506.0L493.0 506.3L493.0 506.7" fill="none" stroke="#e0c8c8" stroke-width="0.90" stroke-linecap="round" stroke-linejoin="round"/>
<path d="M370.8 527.0L370.8 527.3L370.6 527.6L370.3 527.8L370.0 527.8L369.7 527.8L369.4 527.6L369.2 527.3L369.2 527.0L369.2 526.6L369.4 526.3L369.7 526.1L370.0 526.1L370.3 526.1L370.6 526.3L370.8 526.6L370.8 527.0M369.2 527.0L369.2 526.8L369.2 526.6L370.4 525.0" fill="none" stroke="#e0c8c8" stroke-width="0.80" stroke-linecap="round" stroke-linejoin="round"/>
<path d="M360.4 531.8L360.4 534.3M360.4 532.8L360.4 532.9L360.5 532.6L360.7 532.3L361.0 532.0L361.3 531.9L361.7 531.8L362.1 531.8M364.6 533.0L366.6 533.0L366.7 533.1L366.6 532.6L366.3 532.2L366.0 531.9L365.5 531.8L365.1 532.0L364.8 532.3L364.6 532.7L364.6 533.2L364.8 533.7L365.0 534.1L365.4 534.3L365.9 534.3L366.2 534.1L366.5 533.7M370.8 532.1L370.4 531.9L369.8 531.8L369.3 532.0L369.0 532.3L369.0 532.7L369.4 533.0L369.9 533.1L370.4 533.1L370.4 533.2L370.8 533.4L370.9 533.7L370.8 534.0L370.4 534.2L369.9 534.3L369.4 534.2L369.1 534.0M373.3 533.0L375.3 533.0L375.4 533.1L375.3 532.6L375.0 532.2L374.7 531.9L374.2 531.8L373.8 532.0L373.5 532.3L373.3 532.7L373.3 533.2L373.4 533.7L373.7 534.1L374.1 534.3L374.5 534.3L374.9 534.1L375.2 533.7M378.5 530.9L378.5 533.7L378.5 533.7L378.6 534.0L378.7 534.1L378.9 534.3L379.2 534.3L379.5 534.3M377.8 531.8L379.4 531.8" fill="none" stroke="#e0c8c8" stroke-width="0.90" stroke-linecap="round" stroke-linejoin="round"/>
<path d="" fill="none" stroke="#e0c8c8" stroke-width="0.80" stroke-linecap="round" stroke-linejoin="round"/>
<path d="M476.0 531.1L475.6 530.8L475.2 530.6L474.8 530.7L474.5 530.9L474.2 531.3L474.0 531.9L473.9 532.5L474.0 533.2L474.3 533.7L474.6 534.1L475.0 534.3L475.4 534.3L475.7 534.0L476.0 533.6L476.2 533.1L476.3 532.5L476.3 532.6L475.4 532.6M477.4 534.3L477.4 530.6L478.7 530.6L478.7 530.6L479.1 530.7L479.3 530.9L479.5 531.2L479.6 531.5L479.5 531.9L479.3 532.2L479.1 532.4L478.7 532.5L477.4 532.5M481.9 530.6L481.9 534.3M486.4 532.5L486.3 533.0L486.1 533.5L485.9 533.9L485.6 534.2L485.2 534.3L484.9 534.2L484.5 533.9L484.3 533.5L484.1 533.0L484.1 532.5L484.1 531.9L484.3 531.4L484.5 531.0L484.9 530.7L485.2 530.6L485.6 530.7L485.9 531.0L486.1 531.4L486.3 531.9L486.4 532.5M487.4 534.7L489.7 534.7M490.8 530.6L493.0 530.6L491.6 534.3" fill="none" stroke="#e0c8c8" stroke-width="0.90" stroke-linecap="round" stroke-linejoin="round"/>
<path d="M369.2 551.7L370.8 551.7L369.7 554.5" fill="none" stroke="#e0c8c8" stroke-width="0.80" stroke-linecap="round" stroke-linejoin="round"/>
<path d="M362.5 557.8L362.2 557.5L361.8 557.3L361.3 557.3L360.8 557.5L360.5 557.8L360.5 558.3L360.6 558.7L361.0 559.0L361.5 559.1L361.9 559.3L362.0 559.2L362.4 559.4L362.6 559.8L362.6 560.1L362.5 560.4L362.2 560.7L361.8 560.9L361.4 560.9L361.0 560.8L360.7 560.6L360.4 560.3M364.5 557.2L365.2 560.9L365.8 558.8L366.3 560.9L367.0 557.2M371.1 557.9L370.8 557.5L370.5 557.3L370.1 557.2L369.7 557.3L369.4 557.6L369.1 558.0L368.9 558.5L368.9 559.1L368.9 559.6L369.1 560.1L369.4 560.5L369.7 560.8L370.1 560.9L370.5 560.9L370.8 560.6L371.1 560.3M373.1 557.2L373.1 560.9L375.3 560.9M377.3 557.2L377.3 560.9M379.6 557.2L377.3 559.5M378.1 558.8L379.6 560.9" fill="none" stroke="#e0c8c8" stroke-width="0.90" stroke-linecap="round" stroke-linejoin="round"/>
<path d="M484.2 552.4L484.1 552.7L483.9 552.9L483.7 553.1L483.3 553.1L483.1 552.9L482.9 552.7L482.8 552.4L482.9 552.1L483.1 551.8L483.3 551.7L483.7 551.7L483.9 551.8L484.1 552.1L484.2 552.4M484.3 553.8L484.3 554.0L484.1 554.3L483.8 554.4L483.5 554.5L483.2 554.4L482.9 554.3L482.7 554.0L482.7 553.8L482.7 553.5L482.9 553.2L483.2 553.1L483.5 553.0L483.8 553.1L484.1 553.2L484.3 553.5L484.3 553.8" fill="none" stroke="#e0c8c8" stroke-width="0.80" stroke-linecap="round" stroke-linejoin="round"/>
<path d="M476.0 557.8L475.7 557.5L475.3 557.3L474.8 557.3L474.3 557.5L474.0 557.8L474.0 558.3L474.1 558.7L474.5 559.0L475.0 559.1L475.4 559.3L475.5 559.2L475.9 559.4L476.1 559.8L476.1 560.1L476.0 560.4L475.7 560.7L475.3 560.9L474.9 560.9L474.5 560.8L474.2 560.6L473.9 560.3M478.0 557.2L478.7 560.9L479.2 558.8L479.8 560.9L480.5 557.2M482.4 557.2L482.4 560.9L483.3 560.9L483.3 560.9L483.6 560.9L483.9 560.7L484.2 560.4L484.4 560.0L484.5 559.6L484.6 559.1L484.5 558.6L484.4 558.2L484.2 557.8L483.9 557.5L483.6 557.3L483.3 557.2L482.4 557.2M487.7 557.2L487.7 560.9M493.1 559.1L493.0 559.7L492.8 560.2L492.6 560.6L492.3 560.8L491.9 560.9L491.5 560.8L491.2 560.6L491.0 560.2L490.8 559.7L490.8 559.1L490.8 558.5L491.0 558.0L491.2 557.6L491.5 557.3L491.9 557.2L492.3 557.3L492.6 557.6L492.8 558.0L493.0 558.5L493.1 559.1" fill="none" stroke="#e0c8c8" stroke-width="0.90" stroke-linecap="round" stroke-linejoin="round"/>
<path d="M227.5 197.2L227.5 212.3L227.5 212.3L227.2 214.3L226.3 216.1L225.1 217.4L223.5 218.1L221.8 218.1L220.2 217.4L218.9 216.1L218.1 214.3M237.6 201.4L242.7 197.2L242.7 218.2M237.6 218.2L247.7 218.2" fill="none" stroke="#008484" stroke-width="2.60" stroke-linecap="round" stroke-linejoin="round"/>
<path d="M303.7 197.2L303.7 212.3L303.7 212.3L303.4 214.3L302.5 216.1L301.3 217.4L299.7 218.1L298.0 218.1L296.4 217.4L295.1 216.1L294.3 214.3M314.9 201.1L315.9 199.3L317.5 198.0L319.4 197.3L321.4 197.3L323.3 198.0L324.9 199.3L325.9 201.1L326.3 203.1L326.3 203.1L326.1 204.4L325.7 205.7L324.9 206.9L314.1 218.2L326.7 218.2" fill="none" stroke="#008484" stroke-width="2.60" stroke-linecap="round" stroke-linejoin="round"/>
<path d="M431.3 201.9L429.8 199.9L427.4 198.7L424.6 198.7L422.2 199.8L420.6 201.8L420.2 204.3L421.2 206.6L423.3 208.2L425.9 208.8L428.4 209.8L429.0 209.5L430.8 210.8L431.8 212.5L432.0 214.5L431.4 216.3L429.9 217.8L427.8 218.8L425.5 219.0L423.2 218.5L421.4 217.3L420.2 215.7M442.2 198.6L445.7 219.0L449.0 207.2L452.2 219.0L455.7 198.6M466.9 202.7L471.8 198.6L471.8 219.0M466.9 219.0L476.7 219.0" fill="none" stroke="#008484" stroke-width="2.53" stroke-linecap="round" stroke-linejoin="round"/>
<path d="M608.1 197.3L608.1 212.5L608.1 212.5L607.8 214.5L607.0 216.3L605.7 217.6L604.1 218.3L602.4 218.3L600.8 217.6L599.5 216.3L598.7 214.5M627.7 207.9L627.4 211.1L626.5 214.0L625.1 216.4L623.3 217.9L621.4 218.4L619.4 217.9L617.6 216.4L616.2 214.0L615.4 211.1L615.0 207.9L615.4 204.6L616.2 201.7L617.6 199.3L619.4 197.8L621.4 197.3L623.3 197.8L625.1 199.3L626.5 201.7L627.4 204.6L627.7 207.9" fill="none" stroke="#008484" stroke-width="2.61" stroke-linecap="round" stroke-linejoin="round"/>
<path d="M703.1 194.8L703.1 216.6L708.6 216.6L708.6 216.6L710.5 216.2L712.4 215.1L713.9 213.4L715.2 211.1L715.9 208.5L716.2 205.7L715.9 202.9L715.2 200.3L713.9 198.0L712.4 196.3L710.5 195.2L708.6 194.8L703.1 194.8M725.0 199.2L730.2 194.8L730.2 216.6M725.0 216.6L735.5 216.6" fill="none" stroke="#008484" stroke-width="2.68" stroke-linecap="round" stroke-linejoin="round"/>
<path d="M794.4 198.7L792.7 196.5L790.6 195.2L788.4 194.9L786.2 195.5L784.2 197.1L782.7 199.5L781.7 202.4L781.3 205.7L781.7 209.0L782.7 211.9L784.2 214.3L786.2 215.9L788.4 216.5L790.6 216.2L792.7 214.9L794.4 212.7M803.1 194.8L814.6 194.8L808.1 203.5L808.5 203.5L810.8 204.0L812.8 205.2L814.3 207.0L815.0 209.3L814.8 211.6L813.8 213.8L812.1 215.4L810.0 216.4L807.6 216.5L805.4 215.8L803.6 214.3L802.4 212.3" fill="none" stroke="#008484" stroke-width="2.68" stroke-linecap="round" stroke-linejoin="round"/>
<path d="M410.6 351.9L410.6 366.2L410.6 366.2L410.9 368.3L411.8 370.1L413.2 371.6L415.0 372.6L416.9 372.9L418.8 372.6L420.6 371.6L422.0 370.1L422.9 368.3L423.2 366.2L423.2 351.9M433.2 356.1L438.3 351.9L438.3 372.9M433.2 372.9L443.3 372.9" fill="none" stroke="#008484" stroke-width="2.60" stroke-linecap="round" stroke-linejoin="round"/>
<path d="M262.5 429.9L262.5 444.8L262.5 444.8L262.2 446.8L261.4 448.5L260.1 449.8L258.6 450.5L256.9 450.5L255.4 449.8L254.1 448.5L253.3 446.8M269.4 429.9L280.3 429.9L274.1 438.2L274.5 438.2L276.8 438.6L278.7 439.8L280.1 441.5L280.7 443.7L280.6 445.9L279.6 448.0L278.0 449.5L276.0 450.5L273.7 450.6L271.6 449.9L269.8 448.5L268.7 446.5" fill="none" stroke="#008484" stroke-width="2.56" stroke-linecap="round" stroke-linejoin="round"/>
<path d="M541.0 380.6L539.4 378.5L537.4 377.2L535.2 376.8L533.0 377.4L531.1 379.0L529.6 381.3L528.6 384.2L528.3 387.4L528.6 390.6L529.6 393.5L531.1 395.8L533.0 397.4L535.2 398.0L537.4 397.6L539.4 396.3L541.0 394.2M550.5 381.0L555.6 376.8L555.6 398.0M550.5 398.0L560.7 398.0" fill="none" stroke="#008484" stroke-width="2.62" stroke-linecap="round" stroke-linejoin="round"/>
<path d="M602.8 397.6L602.8 378.1L609.8 378.1L609.8 378.1L611.6 378.5L613.1 379.5L614.1 381.1L614.5 383.0L614.1 384.8L613.1 386.4L611.6 387.5L609.8 387.8L602.8 387.8M609.0 387.8L614.5 397.6M627.8 381.7L628.8 380.1L630.2 378.8L632.0 378.2L633.9 378.2L635.7 378.8L637.1 380.1L638.1 381.7L638.4 383.6L638.4 383.6L638.3 384.8L637.8 386.0L637.1 387.1L627.1 397.6L638.8 397.6" fill="none" stroke="#008484" stroke-width="2.41" stroke-linecap="round" stroke-linejoin="round"/>
<path d="M715.5 241h8M719.5 237v8" stroke="#0000d0" stroke-width="1.2"/>
<path d="M794 240h8M798 236v8" stroke="#0000d0" stroke-width="1.2"/>
<path d="M714.5 283h8M718.5 279v8" stroke="#0000d0" stroke-width="1.2"/>
<path d="M540 422.6h8M544 418.6v8" stroke="#0000d0" stroke-width="1.2"/>
<path d="M618.6 422.6h8M622.6 418.6v8" stroke="#0000d0" stroke-width="1.2"/>
<path d="M540 462.4h8M544 458.4v8" stroke="#0000d0" stroke-width="1.2"/>
<path d="M711 340h8M715 336v8" stroke="#0000d0" stroke-width="1.2"/>
<path d="M422.7 476.4h8M426.7 472.4v8" stroke="#0000d0" stroke-width="1.2"/>
<line x1="233.4" y1="257.3" x2="370.0" y2="423.1" stroke="#ffffff" stroke-width="1.2"/>
<line x1="233.4" y1="310.5" x2="370.0" y2="449.8" stroke="#ffffff" stroke-width="1.2"/>
<line x1="233.4" y1="363.8" x2="483.5" y2="396.5" stroke="#ffffff" stroke-width="1.2"/>
<line x1="233.4" y1="417.0" x2="370.0" y2="396.5" stroke="#ffffff" stroke-width="1.2"/>
<line x1="310.5" y1="257.3" x2="370.0" y2="476.4" stroke="#ffffff" stroke-width="1.2"/>
<line x1="310.5" y1="310.5" x2="370.0" y2="503.0" stroke="#ffffff" stroke-width="1.2"/>
<line x1="310.5" y1="363.8" x2="483.5" y2="529.6" stroke="#ffffff" stroke-width="1.2"/>
<line x1="310.5" y1="417.0" x2="483.5" y2="503.0" stroke="#ffffff" stroke-width="1.2"/>
<line x1="380.7" y1="345.2" x2="516.6" y2="345.2" stroke="#ffffff" stroke-width="1.2"/>
<line x1="380.7" y1="345.2" x2="286.7" y2="501.7" stroke="#ffffff" stroke-width="1.2"/>
<line x1="516.6" y1="345.2" x2="565.6" y2="422.2" stroke="#ffffff" stroke-width="1.2"/>
<line x1="483.5" y1="476.4" x2="565.6" y2="422.2" stroke="#ffffff" stroke-width="1.2"/>
<line x1="565.6" y1="422.2" x2="601.0" y2="422.2" stroke="#ffffff" stroke-width="1.2"/>
<line x1="601.0" y1="422.2" x2="640.7" y2="363.8" stroke="#ffffff" stroke-width="1.2"/>
<line x1="640.7" y1="363.8" x2="735.9" y2="340.2" stroke="#ffffff" stroke-width="1.2"/>
<line x1="735.9" y1="340.2" x2="739.0" y2="283.3" stroke="#ffffff" stroke-width="1.2"/>
<line x1="739.0" y1="283.3" x2="818.7" y2="240.2" stroke="#ffffff" stroke-width="1.2"/>
<line x1="640.7" y1="257.4" x2="772.0" y2="240.2" stroke="#ffffff" stroke-width="1.2"/>
<line x1="640.7" y1="257.4" x2="693.5" y2="359.9" stroke="#ffffff" stroke-width="1.2"/>
<line x1="483.5" y1="449.8" x2="521.0" y2="462.6" stroke="#ffffff" stroke-width="1.2"/>
<line x1="521.0" y1="462.6" x2="520.2" y2="423.0" stroke="#ffffff" stroke-width="1.2"/>
<line x1="520.2" y1="423.0" x2="693.5" y2="359.9" stroke="#ffffff" stroke-width="1.2"/>
<line x1="245.3" y1="501.7" x2="694.5" y2="320.5" stroke="#ffffff" stroke-width="1.2"/>
<line x1="694.5" y1="320.5" x2="696.6" y2="283.3" stroke="#ffffff" stroke-width="1.2"/>
<line x1="380.7" y1="251.4" x2="516.6" y2="251.4" stroke="#ffffff" stroke-width="1.2"/>
<line x1="516.6" y1="251.4" x2="587.7" y2="363.8" stroke="#ffffff" stroke-width="1.2"/>
<line x1="587.7" y1="363.8" x2="565.6" y2="461.7" stroke="#ffffff" stroke-width="1.2"/>
<line x1="565.6" y1="461.7" x2="370.0" y2="529.6" stroke="#ffffff" stroke-width="1.2"/>
<line x1="483.5" y1="556.3" x2="587.7" y2="257.4" stroke="#ffffff" stroke-width="1.2"/>
<line x1="370.0" y1="556.3" x2="587.7" y2="310.6" stroke="#ffffff" stroke-width="1.2"/>
<line x1="739.0" y1="241.9" x2="483.5" y2="423.1" stroke="#ffffff" stroke-width="1.2"/>
<line x1="697.6" y1="240.9" x2="643.8" y2="423.0" stroke="#ffffff" stroke-width="1.2"/></svg>

<!-- right toolbar strip -->
<div class="a" style="left:951px;top:715px;width:36px;height:1px;background:#d9dadc"></div>
<div class="a" style="left:987px;top:136px;width:8px;height:580px;background:#dcdddf"></div>

<!-- layers manager -->
<div class="a" style="left:995px;top:136px;width:215px;height:17px;background:linear-gradient(#bdbebe,#d5d6d6)"></div>
<div class="a" style="left:998px;top:136px;font-size:12px;color:#1a1a1a">Layers Manager</div>
<div class="a" style="left:1002px;top:190px;width:203px;height:522px;background:#fff;border:1px solid #b9bcc2"></div>
<div class="a" style="left:1007px;top:194px;width:191px;height:511px;background:#f3f4f6"></div>
<div class="a" style="left:1006px;top:160px;width:60px;height:32px;background:#f5f6f7;border:1px solid #b9bcc2;border-bottom:none;border-radius:4px 4px 0 0"></div>
<div class="a" style="left:1014px;top:167px;font-size:15px;color:#3c3c3c">Layers</div>
<div class="a" style="left:1073px;top:170px;font-size:15px;color:#3c3c3c">Items</div>
<div class="a lrow" style="top:200px"><i class="sw" style="background:#840000"></i><i class="cb"></i><span class="ln">F.Cu</span></div>
<div class="a lrow" style="top:223px"><i class="sw" style="background:#008400"></i><i class="cb"></i><span class="ln">B.Cu</span></div>
<div class="a lrow" style="top:246px"><i class="sw" style="background:#840084"></i><i class="cb"></i><span class="ln">F.Adhes</span></div>
<div class="a lrow" style="top:269px"><i class="sw" style="background:#000084"></i><i class="cb"></i><span class="ln">B.Adhes</span></div>
<div class="a lrow" style="top:292px"><i class="sw" style="background:#840000"></i><i class="cb"></i><span class="ln">F.Paste</span></div>
<div class="a lrow" style="top:315px"><i class="sw" style="background:#00c2c2"></i><i class="cb"></i><span class="ln">B.Paste</span></div>
<div class="a lrow" style="top:338px"><i class="sw" style="background:#008484"></i><i class="cb"></i><span class="ln">F.SilkS</span></div>
<div class="a lrow" style="top:361px"><i class="sw" style="background:#840084"></i><i class="cb"></i><span class="ln">B.SilkS</span></div>
<div class="a lrow" style="top:384px"><i class="sw" style="background:#840084"></i><i class="cb"></i><span class="ln">F.Mask</span></div>
<div class="a lrow" style="top:407px"><i class="sw" style="background:#848400"></i><i class="cb"></i><span class="ln">B.Mask</span></div>
<div class="a lrow" style="top:430px"><i class="sw" style="background:#c2c2c2"></i><i class="cb"></i><span class="ln">Dwgs.User</span></div>
<div class="a lrow" style="top:453px"><i class="sw" style="background:#000084"></i><i class="cb"></i><span class="ln">Cmts.User</span></div>
<div class="a lrow" style="top:476px"><i class="sw" style="background:#008400"></i><i class="cb"></i><span class="ln">Eco1.User</span></div>
<div class="a lrow" style="top:499px"><i class="sw" style="background:#c2c200"></i><i class="cb"></i><span class="ln">Eco2.User</span></div>
<div class="a lrow" style="top:522px"><i class="sw" style="background:#c2c200"></i><i class="cb"></i><span class="ln">Edge.Cuts</span></div>
<div class="a lrow" style="top:545px"><i class="sw" style="background:#c200c2"></i><i class="cb"></i><span class="ln">Margin</span></div>
<div class="a lrow" style="top:568px"><i class="sw" style="background:#c2c2c2"></i><i class="cb"></i><span class="ln">F.CrtYd</span></div>
<div class="a lrow" style="top:591px"><i class="sw" style="background:#848484"></i><i class="cb"></i><span class="ln">B.CrtYd</span></div>
<div class="a lrow" style="top:614px"><i class="sw" style="background:#848484"></i><i class="cb"></i><span class="ln">F.Fab</span></div>
<div class="a lrow" style="top:637px"><i class="sw" style="background:#000084"></i><i class="cb"></i><span class="ln">B.Fab</span></div>
<svg class="a" style="left:1014px;top:201px" width="8" height="12"><path d="M1 0L7 6L1 12Z" fill="#3a3af0"/></svg>

<!-- status bar -->
<div class="a" style="left:0;top:716px;width:36px;height:1px;background:#dcdcdc"></div>
<div class="a st" style="left:14px;top:717.5px;color:#145a14">Pads<br>49</div>
<div class="a st" style="left:79px;top:717.5px;color:#145a14">Vias<br>0</div>
<div class="a st" style="left:140px;top:717.5px;color:#145a14">Track Segments<br>0</div>
<div class="a st" style="left:277px;top:717.5px;color:#145a6e">Nodes<br>49</div>
<div class="a st" style="left:353px;top:717.5px;color:#9a1414">Nets<br>18</div>
<div class="a st" style="left:417px;top:717.5px;color:#14149a">Unrouted<br>32</div>
<div class="a st" style="left:371px;top:754.5px;color:#3c3c3c">Z 5.86</div>
<div class="a st" style="left:440px;top:754.5px;color:#3c3c3c">X 165.100000&nbsp; Y 74.930000</div>
<div class="a st" style="left:647px;top:754.5px;color:#3c3c3c">dx 165.100000&nbsp; dy 74.930000&nbsp; dist 181.308</div>
<div class="a st" style="left:974px;top:754.5px;color:#3c3c3c">mm</div>
</body></html>
